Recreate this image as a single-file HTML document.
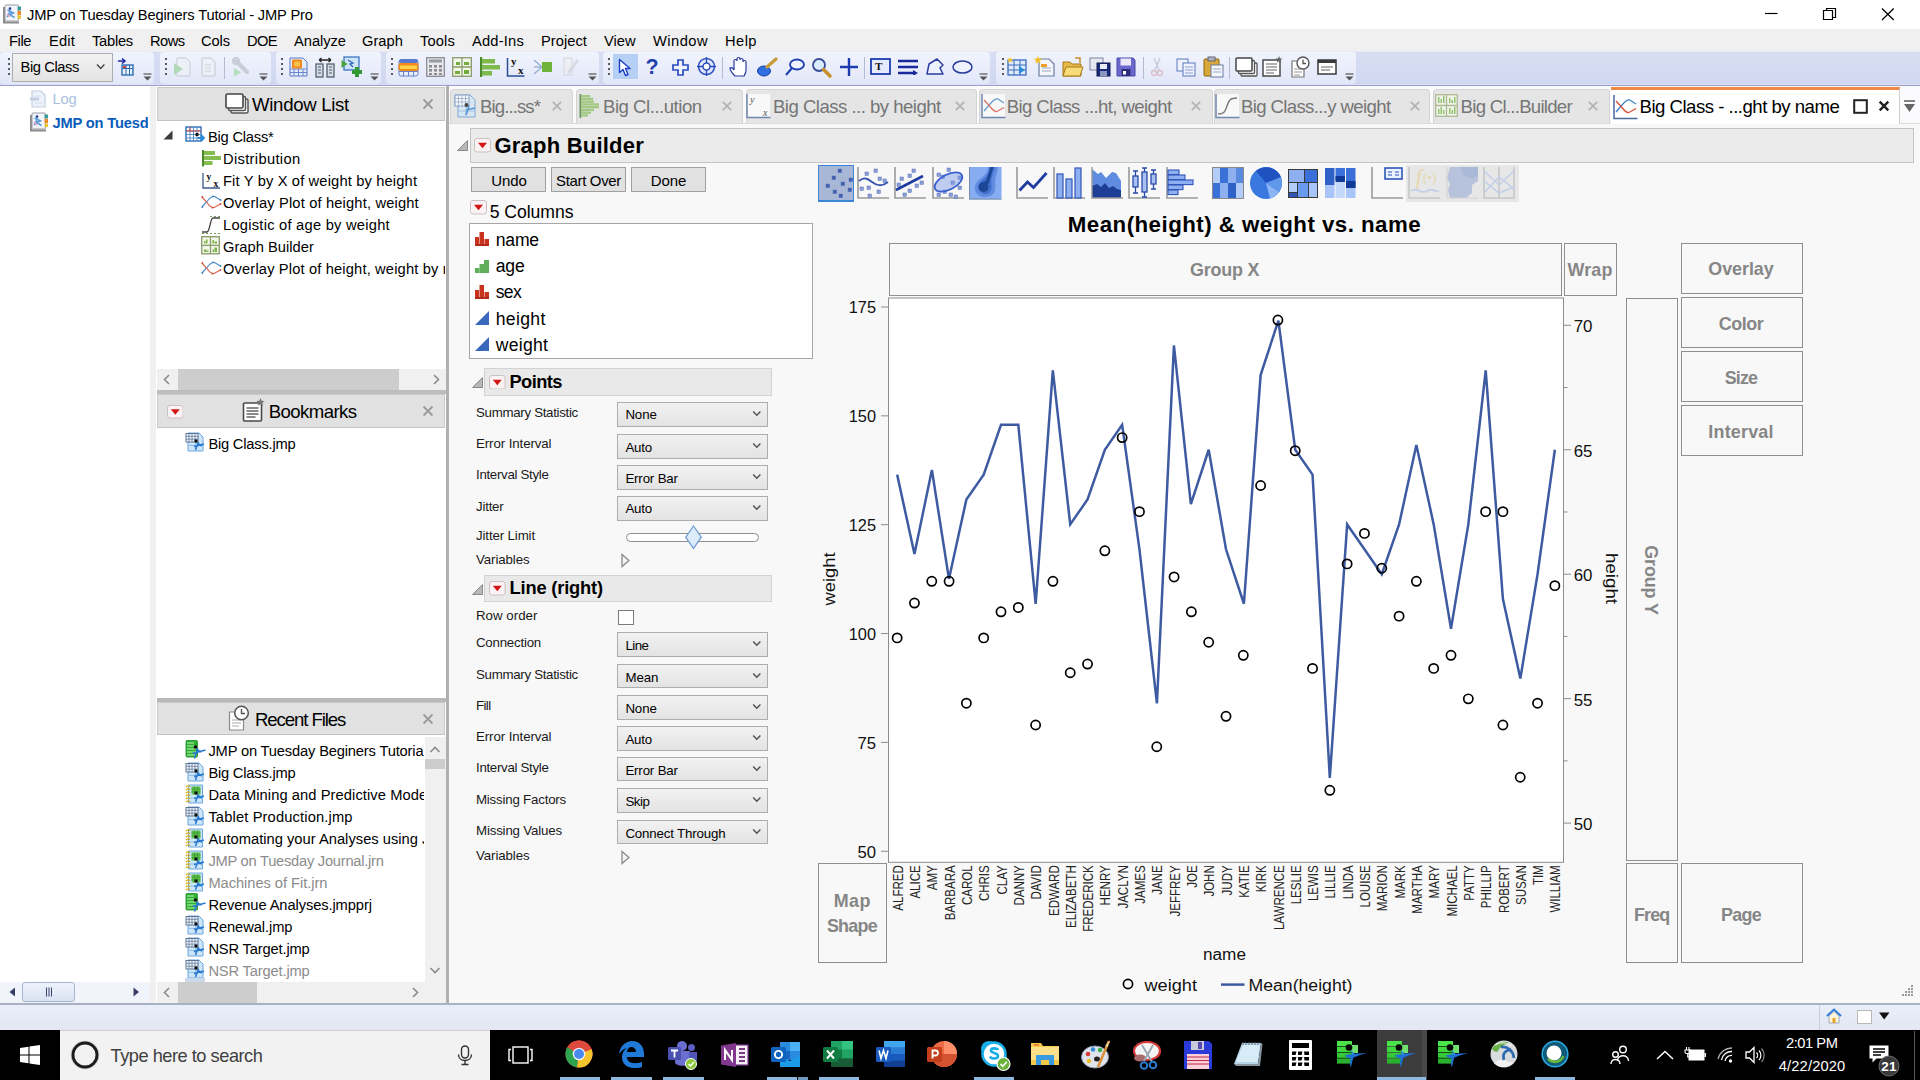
<!DOCTYPE html>
<html lang="en"><head><meta charset="utf-8"><title>JMP on Tuesday Beginers Tutorial - JMP Pro</title>
<style>
html,body{margin:0;padding:0;}
body{width:1920px;height:1080px;overflow:hidden;position:relative;background:#f0f0f0;font-family:"Liberation Sans",sans-serif;}
.b{position:absolute;display:block;}
.t{position:absolute;white-space:nowrap;display:block;}
</style></head>
<body>
<div class="b" style="left:0px;top:0px;width:1920px;height:29px;background:#fff;"></div>
<svg class="b" style="left:3px;top:4px;" width="19" height="20" viewBox="0 0 19 20">
<path d="M1 3v15.500h15" stroke="#8a8a8a" stroke-width="2.200" fill="none"/>
<rect x="2" y="1" width="13.500" height="16" rx="1" fill="#f1f4fa" stroke="#9a9aa2" stroke-width="1"/>
<rect x="14.500" y="2.500" width="3.500" height="4" fill="#3a9a96"/>
<rect x="14.500" y="7" width="3.500" height="4" fill="#f08a28"/>
<rect x="14.500" y="11.500" width="3.500" height="3.500" fill="#e8c83a"/>
<path d="M4 13c2-2 3-5 3-9M4.500 6l6 3-4 1.500 5 3" stroke="#5a9ad8" stroke-width="1.500" fill="none"/>
<circle cx="7" cy="4.500" r="1.300" fill="#2a3a8a"/>
<path d="M4 10l3 3" stroke="#e8a0c0" stroke-width="1.500"/>
</svg>
<span class="t" style="left:27.00px;top:7.56px;font-size:14.7px;line-height:14.7px;color:#000;letter-spacing:-0.161px;">JMP on Tuesday Beginers Tutorial - JMP Pro</span>
<svg class="b" style="left:1750px;top:0px;" width="170" height="29" viewBox="0 0 170 29">
<path d="M15 13.500h12.500" stroke="#000" stroke-width="1.200"/>
<path d="M73.500 10.500h9v9h-9z M76.500 10.500V8.500h9v9h-3" stroke="#000" stroke-width="1.200" fill="none"/>
<path d="M132 8.500l11.700 11.500 M143.700 8.500l-11.700 11.500" stroke="#000" stroke-width="1.250"/>
</svg>
<div class="b" style="left:0px;top:29px;width:1920px;height:22px;background:#f0f0f0;"></div>
<span class="t" style="left:9.00px;top:33.56px;font-size:14.7px;line-height:14.7px;color:#000;letter-spacing:-0.422px;">File</span>
<span class="t" style="left:49.00px;top:33.56px;font-size:14.7px;line-height:14.7px;color:#000;letter-spacing:0.167px;">Edit</span>
<span class="t" style="left:92.00px;top:33.56px;font-size:14.7px;line-height:14.7px;color:#000;letter-spacing:-0.249px;">Tables</span>
<span class="t" style="left:150.00px;top:33.56px;font-size:14.7px;line-height:14.7px;color:#000;letter-spacing:-0.565px;">Rows</span>
<span class="t" style="left:201.00px;top:33.56px;font-size:14.7px;line-height:14.7px;color:#000;letter-spacing:-0.102px;">Cols</span>
<span class="t" style="left:247.00px;top:33.56px;font-size:14.7px;line-height:14.7px;color:#000;letter-spacing:-0.618px;">DOE</span>
<span class="t" style="left:294.00px;top:33.56px;font-size:14.7px;line-height:14.7px;color:#000;letter-spacing:-0.043px;">Analyze</span>
<span class="t" style="left:362.00px;top:33.56px;font-size:14.7px;line-height:14.7px;color:#000;letter-spacing:0.029px;">Graph</span>
<span class="t" style="left:420.00px;top:33.56px;font-size:14.7px;line-height:14.7px;color:#000;letter-spacing:0.136px;">Tools</span>
<span class="t" style="left:472.00px;top:33.56px;font-size:14.7px;line-height:14.7px;color:#000;letter-spacing:0.191px;">Add-Ins</span>
<span class="t" style="left:541.00px;top:33.56px;font-size:14.7px;line-height:14.7px;color:#000;letter-spacing:0.035px;">Project</span>
<span class="t" style="left:604.00px;top:33.56px;font-size:14.7px;line-height:14.7px;color:#000;letter-spacing:-0.025px;">View</span>
<span class="t" style="left:653.00px;top:33.56px;font-size:14.7px;line-height:14.7px;color:#000;letter-spacing:0.453px;">Window</span>
<span class="t" style="left:725.00px;top:33.56px;font-size:14.7px;line-height:14.7px;color:#000;letter-spacing:0.442px;">Help</span>
<div class="b" style="left:0px;top:51px;width:1920px;height:34px;background:linear-gradient(#d8def2,#d0d7f1);"></div>
<div class="b" style="left:0px;top:51px;width:1920px;height:1px;background:#e8ebf6;"></div>
<div class="b" style="left:0px;top:84px;width:1920px;height:1px;background:#dcdff5;"></div>
<div class="b" style="left:0px;top:85px;width:1920px;height:1px;background:#9ba2c9;"></div>
<div class="b" style="left:0px;top:52px;width:154px;height:32px;background:linear-gradient(#f1f4fd,#e2e7f9);border-radius:4px;"></div>
<div class="b" style="left:160px;top:52px;width:111px;height:32px;background:linear-gradient(#f1f4fd,#e2e7f9);border-radius:4px;"></div>
<div class="b" style="left:276px;top:52px;width:105px;height:32px;background:linear-gradient(#f1f4fd,#e2e7f9);border-radius:4px;"></div>
<div class="b" style="left:386px;top:52px;width:213px;height:32px;background:linear-gradient(#f1f4fd,#e2e7f9);border-radius:4px;"></div>
<div class="b" style="left:603px;top:52px;width:387px;height:32px;background:linear-gradient(#f1f4fd,#e2e7f9);border-radius:4px;"></div>
<div class="b" style="left:996px;top:52px;width:360px;height:32px;background:linear-gradient(#f1f4fd,#e2e7f9);border-radius:4px;"></div>
<svg class="b" style="left:8px;top:58px;" width="3" height="18" viewBox="0 0 3 18"><g fill="#5a5a5a"><rect x="0" y="0" width="2" height="2"/><rect x="0" y="5" width="2" height="2"/><rect x="0" y="10" width="2" height="2"/><rect x="0" y="15" width="2" height="2"/></g></svg>
<svg class="b" style="left:165px;top:58px;" width="3" height="18" viewBox="0 0 3 18"><g fill="#5a5a5a"><rect x="0" y="0" width="2" height="2"/><rect x="0" y="5" width="2" height="2"/><rect x="0" y="10" width="2" height="2"/><rect x="0" y="15" width="2" height="2"/></g></svg>
<svg class="b" style="left:281px;top:58px;" width="3" height="18" viewBox="0 0 3 18"><g fill="#5a5a5a"><rect x="0" y="0" width="2" height="2"/><rect x="0" y="5" width="2" height="2"/><rect x="0" y="10" width="2" height="2"/><rect x="0" y="15" width="2" height="2"/></g></svg>
<svg class="b" style="left:391px;top:58px;" width="3" height="18" viewBox="0 0 3 18"><g fill="#5a5a5a"><rect x="0" y="0" width="2" height="2"/><rect x="0" y="5" width="2" height="2"/><rect x="0" y="10" width="2" height="2"/><rect x="0" y="15" width="2" height="2"/></g></svg>
<svg class="b" style="left:608px;top:58px;" width="3" height="18" viewBox="0 0 3 18"><g fill="#5a5a5a"><rect x="0" y="0" width="2" height="2"/><rect x="0" y="5" width="2" height="2"/><rect x="0" y="10" width="2" height="2"/><rect x="0" y="15" width="2" height="2"/></g></svg>
<svg class="b" style="left:1002px;top:58px;" width="3" height="18" viewBox="0 0 3 18"><g fill="#5a5a5a"><rect x="0" y="0" width="2" height="2"/><rect x="0" y="5" width="2" height="2"/><rect x="0" y="10" width="2" height="2"/><rect x="0" y="15" width="2" height="2"/></g></svg>
<svg class="b" style="left:143px;top:73px;" width="9" height="8" viewBox="0 0 9 8"><path d="M0.5 1h8" stroke="#555" stroke-width="1.2"/><path d="M0.5 3.5h8l-4 4z" fill="#555"/></svg>
<svg class="b" style="left:259px;top:73px;" width="9" height="8" viewBox="0 0 9 8"><path d="M0.5 1h8" stroke="#555" stroke-width="1.2"/><path d="M0.5 3.5h8l-4 4z" fill="#555"/></svg>
<svg class="b" style="left:370px;top:73px;" width="9" height="8" viewBox="0 0 9 8"><path d="M0.5 1h8" stroke="#555" stroke-width="1.2"/><path d="M0.5 3.5h8l-4 4z" fill="#555"/></svg>
<svg class="b" style="left:588px;top:73px;" width="9" height="8" viewBox="0 0 9 8"><path d="M0.5 1h8" stroke="#555" stroke-width="1.2"/><path d="M0.5 3.5h8l-4 4z" fill="#555"/></svg>
<svg class="b" style="left:979px;top:73px;" width="9" height="8" viewBox="0 0 9 8"><path d="M0.5 1h8" stroke="#555" stroke-width="1.2"/><path d="M0.5 3.5h8l-4 4z" fill="#555"/></svg>
<svg class="b" style="left:1345px;top:73px;" width="9" height="8" viewBox="0 0 9 8"><path d="M0.5 1h8" stroke="#555" stroke-width="1.2"/><path d="M0.5 3.5h8l-4 4z" fill="#555"/></svg>
<div class="b" style="left:12px;top:53px;width:98.5px;height:27px;background:linear-gradient(#f3f3f3,#e4e4e4);border:1px solid #adadad;"></div>
<span class="t" style="left:20.50px;top:60.06px;font-size:14.7px;line-height:14.7px;color:#000;letter-spacing:-0.399px;">Big Class</span>
<svg class="b" style="left:96px;top:63px;" width="10" height="8" viewBox="0 0 10 8"><path d="M1 1.5l3.7 4 3.7-4" stroke="#444" stroke-width="1.4" fill="none"/></svg>
<svg class="b" style="left:117px;top:57px;" width="18" height="20" viewBox="0 0 18 20"><path d="M1 4h6M5 1.5l3 2.5-3 2.5" stroke="#1a2ea0" stroke-width="1.6" fill="none"/><rect x="5" y="8" width="11" height="10" fill="#e9f2fb" stroke="#2c6db4" stroke-width="1.4"/><path d="M5 11.5h11M9 8v10M12.5 8v10" stroke="#2c6db4" stroke-width="1"/><rect x="6" y="9" width="3" height="2" fill="#d23c3c"/></svg>
<svg class="b" style="left:172px;top:57px;opacity:0.75;" width="20" height="20" viewBox="0 0 20 20"><path d="M5 1h9l4 4v14H5z" fill="#eef1f6" stroke="#b8c0cc"/><path d="M2 6l9 6-9 6z" fill="#9ed3a2"/></svg>
<svg class="b" style="left:200px;top:57px;opacity:0.8;" width="18" height="20" viewBox="0 0 18 20"><path d="M2 1h9l4 4v14H2z" fill="#eef1f6" stroke="#b8c0cc"/><path d="M5 8h6M5 11h6M5 14h6" stroke="#c8ced8"/></svg>
<div class="b" style="left:224px;top:57px;width:1px;height:22px;background:#b4bad0;"></div>
<svg class="b" style="left:231px;top:57px;opacity:0.85;" width="22" height="20" viewBox="0 0 22 20"><path d="M4 3l12 12" stroke="#c3c8d2" stroke-width="4" stroke-linecap="round"/><circle cx="5" cy="4" r="3.2" fill="none" stroke="#c3c8d2" stroke-width="2"/><path d="M3 11l7 4.5-7 4z" fill="#a9dcae"/></svg>
<svg class="b" style="left:289px;top:57px;" width="20" height="20" viewBox="0 0 20 20"><path d="M1 1h13l4 4v14H1z" fill="#e4ecfa" stroke="#5a78c8"/><path d="M1 12h17M1 15.5h17M5 12v7M9.5 12v7M14 12v7" stroke="#6a86d0" stroke-width="1"/><rect x="3" y="2.5" width="10" height="9" rx="1" fill="#f08a1e"/><rect x="5" y="4.5" width="6" height="5" fill="#f8c14a"/></svg>
<svg class="b" style="left:315px;top:56px;" width="20" height="22" viewBox="0 0 20 22"><path d="M4 4h12M4 4l2.5-2M4 4l2.5 2M16 4l-2.5-2M16 4l-2.5 2" stroke="#222" stroke-width="1.3" fill="none"/><rect x="1" y="8" width="7" height="13" fill="#d7dde4" stroke="#50606e" stroke-width="1.3"/><rect x="12" y="8" width="7" height="13" fill="#d7dde4" stroke="#50606e" stroke-width="1.3"/><path d="M3 11h3M3 14h3M3 17h3M14 11h3M14 14h3M14 17h3" stroke="#7b8794" stroke-width="1.3"/></svg>
<svg class="b" style="left:341px;top:56px;" width="23" height="23" viewBox="0 0 23 23"><rect x="3" y="1" width="15" height="13" fill="#cfe3f8" stroke="#3b78c2" stroke-width="1.3"/><path d="M7 4l5 3-3 1 3 3" stroke="#2b67b4" stroke-width="1.3" fill="none"/><path d="M0.5 4l6 4-6 4z" fill="#46a33f"/><path d="M11 16h10M16 11v10" stroke="#2f9a2f" stroke-width="4"/></svg>
<svg class="b" style="left:398px;top:57px;" width="21" height="20" viewBox="0 0 21 20"><rect x="1" y="3" width="19" height="16" rx="2" fill="#e8eefb" stroke="#6a84cc"/><path d="M1 14.5h19M5.5 14v5M10.5 14v5M15.5 14v5" stroke="#6a84cc"/><rect x="1" y="2" width="19" height="4" rx="2" fill="#5a7ad0"/><rect x="0.5" y="6" width="20" height="8" rx="2" fill="#f28a1c"/><rect x="2" y="8.5" width="17" height="3.5" fill="#fdd44c"/></svg>
<svg class="b" style="left:426px;top:57px;" width="19" height="20" viewBox="0 0 19 20"><rect x="0.7" y="0.7" width="17.6" height="18.6" fill="#e9e9ec" stroke="#8c8c94" stroke-width="1.3"/><rect x="3" y="2.5" width="13" height="3" fill="#9a9aa4"/><g fill="#8c8c94"><rect x="3" y="8" width="3" height="2.6"/><rect x="8" y="8" width="3" height="2.6"/><rect x="13" y="8" width="3" height="2.6"/><rect x="3" y="12" width="3" height="2.6"/><rect x="8" y="12" width="3" height="2.6"/><rect x="13" y="12" width="3" height="2.6"/><rect x="3" y="16" width="3" height="2"/><rect x="8" y="16" width="3" height="2"/><rect x="13" y="16" width="3" height="2"/></g></svg>
<svg class="b" style="left:452px;top:57px;" width="20" height="20" viewBox="0 0 20 20"><rect x="0.7" y="0.7" width="18.6" height="18.6" fill="#f2f6e8" stroke="#8a9a6a" stroke-width="1.3"/><path d="M10 1v18M1 10h18" stroke="#8a9a6a" stroke-width="1.3"/><g fill="#6fae3a"><rect x="4" y="5" width="4" height="3"/><rect x="12" y="5" width="5" height="3"/><rect x="3" y="14" width="5" height="3"/><rect x="12" y="13" width="5" height="4"/></g></svg>
<svg class="b" style="left:480px;top:57px;" width="20" height="20" viewBox="0 0 20 20"><rect x="0" y="0" width="2.2" height="20" fill="#4d8a2a"/><rect x="2" y="2" width="13" height="4.5" fill="#7fba4c"/><rect x="2" y="8" width="18" height="4.5" fill="#7fba4c"/><rect x="2" y="14" width="10" height="4.5" fill="#7fba4c"/></svg>
<svg class="b" style="left:506px;top:56px;" width="20" height="22" viewBox="0 0 20 22"><path d="M1.5 2v18h17" stroke="#2a4e92" stroke-width="1.5" fill="none"/><text x="5" y="9" font-family="Liberation Serif,serif" font-weight="700" font-size="11" fill="#111">y</text><text x="12" y="18" font-family="Liberation Serif,serif" font-weight="700" font-size="11" fill="#111">x</text></svg>
<svg class="b" style="left:533px;top:58px;" width="20" height="18" viewBox="0 0 20 18"><path d="M1 2l8 7M1 9h8M1 16l8-7" stroke="#9db4d8" stroke-width="1.6" fill="none"/><rect x="9" y="4" width="10" height="10" fill="#6fb43a"/></svg>
<svg class="b" style="left:562px;top:57px;opacity:0.9;" width="20" height="20" viewBox="0 0 20 20"><rect x="2" y="1" width="8" height="17" fill="#eef0f5" stroke="#d0d4de"/><path d="M16 3L6 16" stroke="#d6d9e2" stroke-width="3"/></svg>
<div class="b" style="left:613px;top:54px;width:25px;height:25px;background:#b5cff5;"></div>
<svg class="b" style="left:618px;top:58px;" width="14" height="20" viewBox="0 0 14 20"><path d="M1.5 1.5v13l3.5-3 2.5 6 2.5-1-2.5-6h4.5z" fill="#fff" stroke="#1c3ec8" stroke-width="1.4" stroke-linejoin="round"/></svg>
<span class="t" style="left:645.50px;top:57.30px;font-size:21.5px;line-height:21.5px;color:#2240ae;letter-spacing:0.367px;font-weight:700;">?</span>
<svg class="b" style="left:672px;top:59px;" width="17" height="17" viewBox="0 0 17 17"><path d="M6 1h5v5H16v5h-5V16h-5v-5H1v-5h5z" fill="#eef3ff" stroke="#2a4cc0" stroke-width="1.7"/></svg>
<svg class="b" style="left:697px;top:57px;" width="19" height="19" viewBox="0 0 19 19"><circle cx="9.500" cy="9.500" r="8" fill="#dfe8fb" stroke="#2a4cc0" stroke-width="1.5"/><circle cx="9.500" cy="9.500" r="3.5" fill="#fff" stroke="#2a4cc0" stroke-width="1.5"/><path d="M9.500 0v6M9.500 13v6M0 9.500h6M13 9.500h6" stroke="#2a4cc0" stroke-width="1.3"/></svg>
<div class="b" style="left:722px;top:57px;width:1px;height:22px;background:#b4bad0;"></div>
<svg class="b" style="left:729px;top:56px;" width="22" height="22" viewBox="0 0 22 22"><path d="M6 20c-3-3-5-6-5-8 1-1 3 0 4 2V5c0-2 3-2 3 0V3c0-2 3-2 3 0v1c0-2 3-2 3 0v2c0-2 3-2 3 0v8c0 3-1 4-2 6z" fill="#fff" stroke="#2a3c9c" stroke-width="1.2"/></svg>
<svg class="b" style="left:757px;top:57px;" width="21" height="20" viewBox="0 0 21 20"><ellipse cx="7" cy="14" rx="6.5" ry="5" fill="#2f6fe0" stroke="#1a3ca0"/><path d="M10 10L19 2" stroke="#c79a3a" stroke-width="3.2" stroke-linecap="round"/></svg>
<svg class="b" style="left:785px;top:58px;" width="20" height="19" viewBox="0 0 20 19"><ellipse cx="12" cy="6.500" rx="7" ry="5" fill="#eef2ff" stroke="#1c3cb0" stroke-width="1.8"/><path d="M7 10L1 17" stroke="#1c3cb0" stroke-width="2"/></svg>
<svg class="b" style="left:811px;top:57px;" width="21" height="21" viewBox="0 0 21 21"><circle cx="8" cy="8" r="6" fill="#d8ecfb" stroke="#3a4a9a" stroke-width="1.8"/><path d="M12.500 12.500L19 19" stroke="#c8902a" stroke-width="3.4" stroke-linecap="round"/></svg>
<svg class="b" style="left:840px;top:58px;" width="18" height="18" viewBox="0 0 18 18"><path d="M9 0v18M0 9h18" stroke="#1c3cb0" stroke-width="2.4"/></svg>
<div class="b" style="left:864px;top:57px;width:1px;height:22px;background:#b4bad0;"></div>
<svg class="b" style="left:870px;top:58px;" width="21" height="17" viewBox="0 0 21 17"><rect x="1" y="1" width="19" height="15" fill="#e4ecfb" stroke="#1c3cb0" stroke-width="1.8"/><text x="5" y="12" font-family="Liberation Serif,serif" font-weight="700" font-size="11" fill="#111">T</text></svg>
<svg class="b" style="left:898px;top:59px;" width="21" height="16" viewBox="0 0 21 16"><path d="M0 2h20M0 8h20M0 14h15" stroke="#1a2a9a" stroke-width="2.6"/><path d="M15 11l5 3-5 3z" fill="#1a2a9a"/></svg>
<svg class="b" style="left:925px;top:58px;" width="20" height="18" viewBox="0 0 20 18"><path d="M2 16L4 6 12 1l6 6-3 3 3 6z" fill="#eef2ff" stroke="#2a3c9c" stroke-width="1.5" stroke-linejoin="round"/></svg>
<svg class="b" style="left:952px;top:60px;" width="21" height="14" viewBox="0 0 21 14"><ellipse cx="10.500" cy="7" rx="9.500" ry="6" fill="#eef2ff" stroke="#2a3c9c" stroke-width="1.5"/></svg>
<svg class="b" style="left:1007px;top:57px;" width="21" height="20" viewBox="0 0 21 20"><rect x="1" y="3" width="18" height="15" fill="#dfeafa" stroke="#3b6cc0" stroke-width="1.3"/><path d="M1 8h18M1 13h18M7 3v15M13 3v15" stroke="#3b6cc0"/><path d="M3 0l1 2 2 0-1.500 1.500 0.500 2-2-1-2 1 0.500-2L0 2l2 0z" fill="#f2c230"/><path d="M12 9l6 4-6 4z" fill="#2a8ad8"/></svg>
<svg class="b" style="left:1034px;top:56px;" width="22" height="21" viewBox="0 0 22 21"><path d="M5 3h10l5 5v12H5z" fill="#f4f6fb" stroke="#6a7ca0" stroke-width="1.2"/><path d="M8 12h9M8 15h9" stroke="#9aa6c0"/><path d="M4 0l1.200 2.500 2.800 0.300-2 2 0.500 2.700-2.500-1.300-2.500 1.300 0.500-2.700-2-2 2.800-0.300z" fill="#f2c230"/><rect x="7" y="8" width="6" height="3" fill="#e8a02a"/></svg>
<svg class="b" style="left:1062px;top:57px;" width="22" height="20" viewBox="0 0 22 20"><path d="M1 5h7l2 2h9v12H1z" fill="#e8b84a" stroke="#a87818"/><path d="M1 19l3-9h17l-3 9z" fill="#f8dc7a" stroke="#a87818"/><path d="M13 1l5 0 0 5" stroke="#c8902a" stroke-width="1.5" fill="none"/></svg>
<svg class="b" style="left:1089px;top:57px;" width="22" height="20" viewBox="0 0 22 20"><rect x="1" y="1" width="13" height="12" fill="#e4e8f0" stroke="#7a86a0"/><rect x="8" y="6" width="13" height="13" fill="#1a2a7a" stroke="#101850"/><rect x="11" y="7" width="7" height="5" fill="#e8ecf6"/><rect x="11" y="14" width="7" height="5" fill="#8a96c0"/></svg>
<svg class="b" style="left:1116px;top:57px;" width="20" height="20" viewBox="0 0 20 20"><path d="M1 1h16l2 2v16H1z" fill="#6a68cc" stroke="#4a48a8"/><rect x="4.5" y="1.5" width="10.5" height="7" fill="#eceafa"/><rect x="5.5" y="12" width="9" height="7" fill="#2e2e7e"/><rect x="7" y="14" width="3" height="3.5" fill="#fff"/></svg>
<div class="b" style="left:1143px;top:57px;width:1px;height:22px;background:#b4bad0;"></div>
<svg class="b" style="left:1150px;top:57px;opacity:0.9;" width="14" height="20" viewBox="0 0 14 20"><path d="M4 1l5 12M10 1L5 13" stroke="#c4c8d4" stroke-width="1.4"/><circle cx="4" cy="16" r="2.500" fill="none" stroke="#d8b8c0" stroke-width="1.300"/><circle cx="10" cy="16" r="2.500" fill="none" stroke="#d8b8c0" stroke-width="1.300"/></svg>
<svg class="b" style="left:1176px;top:58px;" width="20" height="19" viewBox="0 0 20 19"><rect x="1" y="1" width="11" height="12" fill="#eef2fb" stroke="#5a78c0"/><rect x="7" y="5" width="12" height="13" fill="#eef2fb" stroke="#5a78c0"/><path d="M9 9h8M9 12h8M9 15h8" stroke="#8aa0d8"/></svg>
<svg class="b" style="left:1203px;top:56px;" width="21" height="22" viewBox="0 0 21 22"><rect x="1" y="3" width="15" height="17" rx="1" fill="#d8a83a" stroke="#8a6410"/><rect x="5" y="1" width="7" height="4" fill="#b0b4c0" stroke="#60646e"/><rect x="8" y="9" width="12" height="12" fill="#f4f6fb" stroke="#6a7ca0"/><path d="M10 13h8M10 16h8" stroke="#9aa6c0"/></svg>
<div class="b" style="left:1229px;top:57px;width:1px;height:22px;background:#b4bad0;"></div>
<svg class="b" style="left:1235px;top:57px;" width="23" height="21" viewBox="0 0 23 21"><rect x="6" y="6" width="16" height="13" rx="1" fill="#fff" stroke="#555" stroke-width="1.3"/><rect x="3.5" y="3.5" width="16" height="13" rx="1" fill="#fff" stroke="#555" stroke-width="1.3"/><rect x="1" y="1" width="16" height="13" rx="1" fill="#fff" stroke="#444" stroke-width="1.5"/></svg>
<svg class="b" style="left:1262px;top:56px;" width="22" height="21" viewBox="0 0 22 21"><rect x="1" y="4" width="17" height="16" fill="#fff" stroke="#4a4a4a" stroke-width="1.500"/><path d="M4 8h11M4 11h11M4 14h11M4 17h8" stroke="#666" stroke-width="1.200"/><path d="M17 0l1 2.500 2.500 0-2 1.800 0.800 2.500-2.300-1.500-2.300 1.500 0.800-2.500-2-1.800 2.500 0z" fill="#666"/></svg>
<svg class="b" style="left:1291px;top:56px;" width="20" height="22" viewBox="0 0 20 22"><path d="M1 5h12v16H1z" fill="#fff" stroke="#777" stroke-width="1.200"/><path d="M3 13h8M3 16h8M3 19h6" stroke="#999"/><circle cx="12" cy="7" r="6" fill="#fff" stroke="#555" stroke-width="1.400"/><path d="M12 3.500v4h3" stroke="#555" stroke-width="1.300" fill="none"/></svg>
<svg class="b" style="left:1317px;top:59px;" width="20" height="16" viewBox="0 0 20 16"><rect x="1" y="1" width="18" height="14" fill="#fff" stroke="#3a3a3a" stroke-width="1.500"/><rect x="1" y="1" width="18" height="3" fill="#3a3a3a"/><path d="M4 8h12M4 11h9" stroke="#666" stroke-width="1.200"/></svg>
<div class="b" style="left:0px;top:86px;width:450px;height:918px;background:#f0f0f0;"></div>
<div class="b" style="left:0px;top:86px;width:149.5px;height:896px;background:#fff;"></div>
<svg class="b" style="left:29px;top:90px;" width="19" height="18" viewBox="0 0 19 18"><path d="M3 1h9l4 4v12H3z" fill="#eef3fa" stroke="#c3d0e2" stroke-width="1.200"/><path d="M1 9h9" stroke="#c3d0e2" stroke-width="3"/><path d="M5 6h7M5 13h8" stroke="#d4deec"/></svg>
<span class="t" style="left:52.50px;top:92.06px;font-size:14.7px;line-height:14.7px;color:#a9c1dc;letter-spacing:-0.176px;">Log</span>
<svg class="b" style="left:30px;top:112px;" width="19" height="20" viewBox="0 0 19 20">
<path d="M1 3v15.500h15" stroke="#8a8a8a" stroke-width="2.200" fill="none"/>
<rect x="2" y="1" width="13.500" height="16" rx="1" fill="#f1f4fa" stroke="#9a9aa2" stroke-width="1"/>
<rect x="14.500" y="2.500" width="3.500" height="4" fill="#3a9a96"/>
<rect x="14.500" y="7" width="3.500" height="4" fill="#f08a28"/>
<rect x="14.500" y="11.500" width="3.500" height="3.500" fill="#e8c83a"/>
<path d="M4 13c2-2 3-5 3-9M4.500 6l6 3-4 1.500 5 3" stroke="#5a9ad8" stroke-width="1.500" fill="none"/>
<circle cx="7" cy="4.500" r="1.300" fill="#2a3a8a"/>
<path d="M4 10l3 3" stroke="#e8a0c0" stroke-width="1.500"/>
</svg>
<div class="b" style="left:52px;top:110px;width:95.5px;height:24px;overflow:hidden;"><span class="t" style="left:0.50px;top:5.86px;font-size:14.7px;line-height:14.7px;color:#0b5cba;letter-spacing:-0.189px;font-weight:700;">JMP on Tuesday</span></div>
<div class="b" style="left:0px;top:982px;width:149px;height:20px;background:#f1f4fb;"></div>
<svg class="b" style="left:6px;top:984px;" width="12" height="16" viewBox="0 0 12 16"><path d="M9 3.500L3.500 8 9 12.500z" fill="#3a3f6a"/></svg>
<svg class="b" style="left:130px;top:984px;" width="12" height="16" viewBox="0 0 12 16"><path d="M3.500 3.500L9 8 3.500 12.500z" fill="#3a3f6a"/></svg>
<div class="b" style="left:22px;top:982px;width:51px;height:18px;background:linear-gradient(#eef3fb,#d9e3f4);border:1px solid #aab6cf;border-radius:3px;"></div>
<svg class="b" style="left:44px;top:986px;" width="10" height="12" viewBox="0 0 10 12"><path d="M2.500 1.500v9M5 1.500v9M7.500 1.500v9" stroke="#3a3f6a" stroke-width="1"/></svg>
<div class="b" style="left:446px;top:86px;width:3px;height:918px;background:#b0b0b0;"></div>
<div class="b" style="left:156px;top:86px;width:290px;height:917px;background:#fff;"></div>
<div class="b" style="left:157px;top:86.5px;width:287.5px;height:34px;background:#e1e1e1;border:1px solid #cacaca;box-sizing:border-box;border-bottom-color:#c4c4c4;"></div>
<svg class="b" style="left:225px;top:92px;" width="24" height="22" viewBox="0 0 24 22"><rect x="6" y="7" width="17" height="14" rx="1.500" fill="#fff" stroke="#555" stroke-width="1.500"/><rect x="3.500" y="4.500" width="17" height="14" rx="1.500" fill="#fff" stroke="#555" stroke-width="1.500"/><rect x="1" y="2" width="17" height="14" rx="1.500" fill="#fff" stroke="#444" stroke-width="1.600"/></svg>
<span class="t" style="left:252.00px;top:95.56px;font-size:18.6px;line-height:18.6px;color:#000;letter-spacing:-0.297px;">Window List</span>
<svg class="b" style="left:421px;top:96.5px;" width="14" height="14" viewBox="0 0 14 14"><path d="M2.5 2.5L11.5 11.5M11.5 2.5L2.5 11.5" stroke="#9a9a9a" stroke-width="1.8"/></svg>
<svg class="b" style="left:162px;top:129px;" width="12" height="12" viewBox="0 0 12 12"><path d="M10.500 1.500v9h-9z" fill="#3c3c3c"/></svg>
<svg class="b" style="left:185px;top:126px;" width="20" height="19" viewBox="0 0 20 19"><rect x="1" y="1" width="15" height="14" fill="#fff" stroke="#2c6db4" stroke-width="1.400"/><path d="M1 5h15M1 8.500h15M1 12h15M5 1v14M8.500 1v14M12 1v14" stroke="#4c86c8" stroke-width="0.900"/><path d="M1 5h15M5 1v4" stroke="#d04040" stroke-width="1"/><rect x="10.500" y="7" width="3" height="3" fill="#111"/><path d="M13 12l6 0M16 9l3 3-3 3" stroke="#2a8ad8" stroke-width="1.800" fill="none"/></svg>
<span class="t" style="left:208.00px;top:130.06px;font-size:14.7px;line-height:14.7px;color:#000;letter-spacing:-0.221px;">Big Class*</span>
<svg class="b" style="left:201.5px;top:150.3px;" width="20" height="17" viewBox="0 0 20 17"><rect x="0" y="0" width="2" height="16.500" fill="#4d8a2a"/><rect x="2" y="1" width="11" height="4" fill="#84bd50"/><rect x="2" y="6" width="17" height="4" fill="#84bd50"/><rect x="2" y="11" width="8.500" height="4" fill="#84bd50"/></svg>
<span class="t" style="left:223.00px;top:151.86px;font-size:14.7px;line-height:14.7px;color:#000;letter-spacing:0.331px;">Distribution</span>
<svg class="b" style="left:201.5px;top:173.3px;" width="20" height="17" viewBox="0 0 20 17"><path d="M1 0v15h17" stroke="#3a5a8c" stroke-width="1.300" fill="none"/><text x="4.500" y="6.500" font-family="Liberation Serif,serif" font-weight="700" font-size="9.500" fill="#111">y</text><text x="11.500" y="13.500" font-family="Liberation Serif,serif" font-weight="700" font-size="9.500" fill="#111">x</text></svg>
<span class="t" style="left:223.00px;top:173.86px;font-size:14.7px;line-height:14.7px;color:#000;letter-spacing:0.148px;">Fit Y by X of weight by height</span>
<svg class="b" style="left:201px;top:194.8px;" width="21" height="15" viewBox="0 0 21 15"><path d="M1 12L6 6.500Q10 1 13.500 1.500L19.500 5" stroke="#4a8ac8" stroke-width="1.150" fill="none"/><path d="M1 2L6 7.500Q9.500 13 13 12.500L19.500 9" stroke="#d8604a" stroke-width="1.150" fill="none"/><g fill="#3a7ab8"><circle cx="1.300" cy="12" r="0.900"/><circle cx="12" cy="1.300" r="0.900"/><circle cx="19.500" cy="5" r="0.900"/></g><g fill="#d04a3a"><circle cx="1.300" cy="2" r="0.900"/><circle cx="11.500" cy="12.700" r="0.900"/><circle cx="19.500" cy="9" r="0.900"/></g></svg>
<span class="t" style="left:223.00px;top:195.86px;font-size:14.7px;line-height:14.7px;color:#000;letter-spacing:0.160px;">Overlay Plot of height, weight</span>
<svg class="b" style="left:201px;top:215.3px;" width="20" height="19" viewBox="0 0 20 19"><path d="M1 17h5c3 0 3-14 6-14h7" stroke="#444" stroke-width="1.300" fill="none"/><path d="M1 18.500h18" stroke="#7a9a5a" stroke-width="1" stroke-dasharray="2 2"/><path d="M9 1.500h10" stroke="#7a9a5a" stroke-width="1" stroke-dasharray="2 2"/></svg>
<span class="t" style="left:223.00px;top:217.86px;font-size:14.7px;line-height:14.7px;color:#000;letter-spacing:0.241px;">Logistic of age by weight</span>
<svg class="b" style="left:201px;top:236.3px;" width="19" height="19" viewBox="0 0 19 19"><rect x="0.700" y="0.700" width="17.600" height="17.100" fill="#f2f6e8" stroke="#8a9a6a" stroke-width="1.300"/><path d="M9.500 1v17M1 9.300h17" stroke="#8a9a6a" stroke-width="1.200"/><g fill="#78b444"><rect x="3" y="5" width="1.500" height="2.500"/><rect x="5" y="3.500" width="1.500" height="4"/><rect x="11.500" y="4" width="1.500" height="3.500"/><rect x="13.500" y="5.500" width="2.500" height="2"/><rect x="3" y="13.500" width="2.500" height="2.500"/><rect x="6" y="14.500" width="1.500" height="1.500"/><rect x="11.500" y="13.500" width="1.500" height="2.500"/><rect x="13.500" y="11.500" width="2.500" height="4.500"/></g></svg>
<span class="t" style="left:223.00px;top:239.86px;font-size:14.7px;line-height:14.7px;color:#000;letter-spacing:0.023px;">Graph Builder</span>
<svg class="b" style="left:201px;top:260.8px;" width="21" height="15" viewBox="0 0 21 15"><path d="M1 12L6 6.500Q10 1 13.500 1.500L19.500 5" stroke="#4a8ac8" stroke-width="1.150" fill="none"/><path d="M1 2L6 7.500Q9.500 13 13 12.500L19.500 9" stroke="#d8604a" stroke-width="1.150" fill="none"/><g fill="#3a7ab8"><circle cx="1.300" cy="12" r="0.900"/><circle cx="12" cy="1.300" r="0.900"/><circle cx="19.500" cy="5" r="0.900"/></g><g fill="#d04a3a"><circle cx="1.300" cy="2" r="0.900"/><circle cx="11.500" cy="12.700" r="0.900"/><circle cx="19.500" cy="9" r="0.900"/></g></svg>
<div class="b" style="left:223px;top:258.3px;width:222px;height:22px;overflow:hidden;"><span class="t" style="left:0.00px;top:3.56px;font-size:14.7px;line-height:14.7px;color:#000;letter-spacing:0.146px;">Overlay Plot of height, weight by name</span></div>
<div class="b" style="left:157px;top:369px;width:289px;height:21px;background:#f0f0f0;"></div>
<div class="b" style="left:178px;top:369px;width:221px;height:21px;background:#cdcdcd;"></div>
<svg class="b" style="left:157px;top:369px;" width="20" height="21" viewBox="0 0 20 21"><path d="M12 6.0l-4.500 4.500 4.500 4.500" stroke="#8a8a8a" stroke-width="1.600" fill="none"/></svg>
<svg class="b" style="left:426px;top:369px;" width="20" height="21" viewBox="0 0 20 21"><path d="M8 6.0l4.500 4.500-4.500 4.500" stroke="#8a8a8a" stroke-width="1.600" fill="none"/></svg>
<div class="b" style="left:157px;top:390px;width:289px;height:3.5px;background:#bdbdbd;"></div>
<div class="b" style="left:157px;top:393.5px;width:287.5px;height:34px;background:#e1e1e1;border:1px solid #cacaca;box-sizing:border-box;border-bottom-color:#c4c4c4;"></div>
<svg class="b" style="left:242px;top:398px;" width="23" height="24" viewBox="0 0 23 24"><rect x="1.500" y="5" width="18" height="18" rx="1" fill="#fff" stroke="#4a4a4a" stroke-width="1.600"/><path d="M4.500 10h12M4.500 13h12M4.500 16h12M4.500 19h9" stroke="#666" stroke-width="1.300"/><path d="M18.500 0l1.200 2.800 2.800 0.200-2.200 2 0.800 2.800-2.600-1.600-2.600 1.600 0.800-2.800-2.200-2 2.800-0.200z" fill="#777"/></svg>
<span class="t" style="left:268.80px;top:403.06px;font-size:18.6px;line-height:18.6px;color:#000;letter-spacing:-0.592px;">Bookmarks</span>
<svg class="b" style="left:421px;top:403.5px;" width="14" height="14" viewBox="0 0 14 14"><path d="M2.5 2.5L11.5 11.5M11.5 2.5L2.5 11.5" stroke="#9a9a9a" stroke-width="1.8"/></svg>
<svg class="b" style="left:166.5px;top:405px;" width="16.5" height="13.5" viewBox="0 0 16.5 13.5"><rect x="0.5" y="0.5" width="15.5" height="12.5" rx="2.5" fill="#fbf3f3" stroke="#c9c1c1"/><path d="M3.8 4.2h9l-4.500 5.500z" fill="#d31515"/></svg>
<svg class="b" style="left:185px;top:432px;" width="21" height="20" viewBox="0 0 21 20"><path d="M3 1h11l4 4v14H3z" fill="#cde5f9" stroke="#6aa6dc" stroke-width="1"/><rect x="1" y="1.500" width="12" height="8.500" fill="#f4f8fc" stroke="#50688c" stroke-width="0.900"/><path d="M1 4.300h12M1 7.200h12M4 1.500v8.500M7 1.500v8.500M10 1.500v8.500" stroke="#60789c" stroke-width="0.800"/><path d="M3 13.500h15M10.500 10v9" stroke="#8fc0e8" stroke-width="1"/><circle cx="11" cy="9" r="1.700" fill="#111"/><path d="M13.500 10l-3 8M9 14.500l10-2.500M12 11l5 3" stroke="#2a7ad0" stroke-width="1.500" fill="none"/></svg>
<span class="t" style="left:208.40px;top:436.96px;font-size:14.7px;line-height:14.7px;color:#000;letter-spacing:-0.212px;">Big Class.jmp</span>
<div class="b" style="left:157px;top:697.5px;width:289px;height:4px;background:#b8b8b8;"></div>
<div class="b" style="left:157px;top:702px;width:287.5px;height:33px;background:#e1e1e1;border:1px solid #cacaca;box-sizing:border-box;border-bottom-color:#c4c4c4;"></div>
<svg class="b" style="left:228px;top:705px;" width="22" height="26" viewBox="0 0 22 26"><path d="M1.500 7h14v18h-14z" fill="#fff" stroke="#8a8a8a" stroke-width="1.200"/><path d="M4 15h9M4 18h9M4 21h7" stroke="#aaa"/><circle cx="13.500" cy="8" r="6.800" fill="#fff" stroke="#555" stroke-width="1.500"/><path d="M13.500 4v4.500h3.500" stroke="#555" stroke-width="1.400" fill="none"/></svg>
<span class="t" style="left:255.00px;top:710.56px;font-size:18.6px;line-height:18.6px;color:#000;letter-spacing:-1.089px;">Recent Files</span>
<svg class="b" style="left:421px;top:711.7px;" width="14" height="14" viewBox="0 0 14 14"><path d="M2.5 2.5L11.5 11.5M11.5 2.5L2.5 11.5" stroke="#9a9a9a" stroke-width="1.8"/></svg>
<svg class="b" style="left:185px;top:739.8px;" width="22" height="20" viewBox="0 0 22 20"><rect x="1" y="0.500" width="11.500" height="16.500" rx="1" fill="#2fae34" stroke="#1c8a24" stroke-width="0.800"/><path d="M2 3h9.500M2 6h9.500M2 9h9.500M2 12h9.500M2 15h9.500" stroke="#8fe088" stroke-width="1.400"/><rect x="9" y="2" width="4" height="5" fill="#2fae34"/><circle cx="10.500" cy="7" r="1.800" fill="#111"/><path d="M13 8.500l-3.500 10M7.500 13.500l13-3.500M11 9.500l5.500 2.500" stroke="#2a7ad0" stroke-width="1.600" fill="none"/></svg>
<div class="b" style="left:208.4px;top:739.8px;width:216px;height:22px;overflow:hidden;"><span class="t" style="left:0.00px;top:4.36px;font-size:14.7px;line-height:14.7px;color:#000;letter-spacing:-0.165px;">JMP on Tuesday Beginers Tutorial.jmpprj</span></div>
<svg class="b" style="left:185px;top:761.75px;" width="21" height="20" viewBox="0 0 21 20"><path d="M3 1h11l4 4v14H3z" fill="#cde5f9" stroke="#6aa6dc" stroke-width="1"/><rect x="1" y="1.500" width="12" height="8.500" fill="#f4f8fc" stroke="#50688c" stroke-width="0.900"/><path d="M1 4.300h12M1 7.200h12M4 1.500v8.500M7 1.500v8.500M10 1.500v8.500" stroke="#60789c" stroke-width="0.800"/><path d="M3 13.500h15M10.500 10v9" stroke="#8fc0e8" stroke-width="1"/><circle cx="11" cy="9" r="1.700" fill="#111"/><path d="M13.500 10l-3 8M9 14.500l10-2.500M12 11l5 3" stroke="#2a7ad0" stroke-width="1.500" fill="none"/></svg>
<span class="t" style="left:208.40px;top:766.11px;font-size:14.7px;line-height:14.7px;color:#000;letter-spacing:-0.212px;">Big Class.jmp</span>
<svg class="b" style="left:185px;top:783.6999999999999px;" width="21" height="20" viewBox="0 0 21 20"><path d="M3.500 1h14v18h-14z" fill="#cde5f9" stroke="#6aa6dc" stroke-width="1"/><path d="M0.800 3c2-1.500 4-1.500 4 0M0.800 6c2-1.500 4-1.500 4 0M0.800 9c2-1.500 4-1.500 4 0M0.800 12c2-1.500 4-1.500 4 0M0.800 15c2-1.500 4-1.500 4 0M0.800 18c2-1.500 4-1.500 4 0" stroke="#d8b020" stroke-width="1.300" fill="none"/><rect x="6.500" y="2.500" width="9" height="8" fill="#5cc04a"/><path d="M6.500 5h9M6.500 7.700h9M9.500 2.500v8M12.500 2.500v8" stroke="#3a9a30" stroke-width="0.700"/><path d="M5 14h13" stroke="#8fc0e8" stroke-width="1"/><circle cx="11" cy="9" r="1.700" fill="#111"/><path d="M13.500 10l-3 8M9 14.500l10-2.500M12 11l5 3" stroke="#2a7ad0" stroke-width="1.500" fill="none"/></svg>
<div class="b" style="left:208.4px;top:783.6999999999999px;width:216px;height:22px;overflow:hidden;"><span class="t" style="left:0.00px;top:4.36px;font-size:14.7px;line-height:14.7px;color:#000;letter-spacing:0.080px;">Data Mining and Predictive Modeling.jrn</span></div>
<svg class="b" style="left:185px;top:805.65px;" width="21" height="20" viewBox="0 0 21 20"><path d="M3 1h11l4 4v14H3z" fill="#cde5f9" stroke="#6aa6dc" stroke-width="1"/><rect x="1" y="1.500" width="12" height="8.500" fill="#f4f8fc" stroke="#50688c" stroke-width="0.900"/><path d="M1 4.300h12M1 7.200h12M4 1.500v8.500M7 1.500v8.500M10 1.500v8.500" stroke="#60789c" stroke-width="0.800"/><path d="M3 13.500h15M10.500 10v9" stroke="#8fc0e8" stroke-width="1"/><circle cx="11" cy="9" r="1.700" fill="#111"/><path d="M13.500 10l-3 8M9 14.500l10-2.500M12 11l5 3" stroke="#2a7ad0" stroke-width="1.500" fill="none"/></svg>
<span class="t" style="left:208.40px;top:810.01px;font-size:14.7px;line-height:14.7px;color:#000;letter-spacing:0.140px;">Tablet Production.jmp</span>
<svg class="b" style="left:185px;top:827.5999999999999px;" width="21" height="20" viewBox="0 0 21 20"><path d="M3.500 1h14v18h-14z" fill="#cde5f9" stroke="#6aa6dc" stroke-width="1"/><path d="M0.800 3c2-1.500 4-1.500 4 0M0.800 6c2-1.500 4-1.500 4 0M0.800 9c2-1.500 4-1.500 4 0M0.800 12c2-1.500 4-1.500 4 0M0.800 15c2-1.500 4-1.500 4 0M0.800 18c2-1.500 4-1.500 4 0" stroke="#d8b020" stroke-width="1.300" fill="none"/><rect x="6.500" y="2.500" width="9" height="8" fill="#5cc04a"/><path d="M6.500 5h9M6.500 7.700h9M9.500 2.500v8M12.500 2.500v8" stroke="#3a9a30" stroke-width="0.700"/><path d="M5 14h13" stroke="#8fc0e8" stroke-width="1"/><circle cx="11" cy="9" r="1.700" fill="#111"/><path d="M13.500 10l-3 8M9 14.500l10-2.500M12 11l5 3" stroke="#2a7ad0" stroke-width="1.500" fill="none"/></svg>
<div class="b" style="left:208.4px;top:827.5999999999999px;width:216px;height:22px;overflow:hidden;"><span class="t" style="left:0.00px;top:4.36px;font-size:14.7px;line-height:14.7px;color:#000;letter-spacing:0.020px;">Automating your Analyses using JSL.jrn</span></div>
<svg class="b" style="left:185px;top:849.55px;" width="21" height="20" viewBox="0 0 21 20"><path d="M3.500 1h14v18h-14z" fill="#cde5f9" stroke="#6aa6dc" stroke-width="1"/><path d="M0.800 3c2-1.500 4-1.500 4 0M0.800 6c2-1.500 4-1.500 4 0M0.800 9c2-1.500 4-1.500 4 0M0.800 12c2-1.500 4-1.500 4 0M0.800 15c2-1.500 4-1.500 4 0M0.800 18c2-1.500 4-1.500 4 0" stroke="#d8b020" stroke-width="1.300" fill="none"/><rect x="6.500" y="2.500" width="9" height="8" fill="#5cc04a"/><path d="M6.500 5h9M6.500 7.700h9M9.500 2.500v8M12.500 2.500v8" stroke="#3a9a30" stroke-width="0.700"/><path d="M5 14h13" stroke="#8fc0e8" stroke-width="1"/><circle cx="11" cy="9" r="1.700" fill="#111"/><path d="M13.500 10l-3 8M9 14.500l10-2.500M12 11l5 3" stroke="#2a7ad0" stroke-width="1.500" fill="none"/></svg>
<span class="t" style="left:208.40px;top:853.91px;font-size:14.7px;line-height:14.7px;color:#8c8c8c;letter-spacing:-0.252px;">JMP on Tuesday Journal.jrn</span>
<svg class="b" style="left:185px;top:871.5px;" width="21" height="20" viewBox="0 0 21 20"><path d="M3.500 1h14v18h-14z" fill="#cde5f9" stroke="#6aa6dc" stroke-width="1"/><path d="M0.800 3c2-1.500 4-1.500 4 0M0.800 6c2-1.500 4-1.500 4 0M0.800 9c2-1.500 4-1.500 4 0M0.800 12c2-1.500 4-1.500 4 0M0.800 15c2-1.500 4-1.500 4 0M0.800 18c2-1.500 4-1.500 4 0" stroke="#d8b020" stroke-width="1.300" fill="none"/><rect x="6.500" y="2.500" width="9" height="8" fill="#5cc04a"/><path d="M6.500 5h9M6.500 7.700h9M9.500 2.500v8M12.500 2.500v8" stroke="#3a9a30" stroke-width="0.700"/><path d="M5 14h13" stroke="#8fc0e8" stroke-width="1"/><circle cx="11" cy="9" r="1.700" fill="#111"/><path d="M13.500 10l-3 8M9 14.500l10-2.500M12 11l5 3" stroke="#2a7ad0" stroke-width="1.500" fill="none"/></svg>
<span class="t" style="left:208.40px;top:875.86px;font-size:14.7px;line-height:14.7px;color:#8c8c8c;letter-spacing:-0.052px;">Machines of Fit.jrn</span>
<svg class="b" style="left:185px;top:893.4499999999999px;" width="22" height="20" viewBox="0 0 22 20"><rect x="1" y="0.500" width="11.500" height="16.500" rx="1" fill="#2fae34" stroke="#1c8a24" stroke-width="0.800"/><path d="M2 3h9.500M2 6h9.500M2 9h9.500M2 12h9.500M2 15h9.500" stroke="#8fe088" stroke-width="1.400"/><rect x="9" y="2" width="4" height="5" fill="#2fae34"/><circle cx="10.500" cy="7" r="1.800" fill="#111"/><path d="M13 8.500l-3.500 10M7.500 13.500l13-3.500M11 9.500l5.500 2.500" stroke="#2a7ad0" stroke-width="1.600" fill="none"/></svg>
<span class="t" style="left:208.40px;top:897.81px;font-size:14.7px;line-height:14.7px;color:#000;letter-spacing:-0.099px;">Revenue Analyses.jmpprj</span>
<svg class="b" style="left:185px;top:915.4px;" width="21" height="20" viewBox="0 0 21 20"><path d="M3 1h11l4 4v14H3z" fill="#cde5f9" stroke="#6aa6dc" stroke-width="1"/><rect x="1" y="1.500" width="12" height="8.500" fill="#f4f8fc" stroke="#50688c" stroke-width="0.900"/><path d="M1 4.300h12M1 7.200h12M4 1.500v8.500M7 1.500v8.500M10 1.500v8.500" stroke="#60789c" stroke-width="0.800"/><path d="M3 13.500h15M10.500 10v9" stroke="#8fc0e8" stroke-width="1"/><circle cx="11" cy="9" r="1.700" fill="#111"/><path d="M13.500 10l-3 8M9 14.500l10-2.500M12 11l5 3" stroke="#2a7ad0" stroke-width="1.500" fill="none"/></svg>
<span class="t" style="left:208.40px;top:919.76px;font-size:14.7px;line-height:14.7px;color:#000;letter-spacing:-0.079px;">Renewal.jmp</span>
<svg class="b" style="left:185px;top:937.3499999999999px;" width="21" height="20" viewBox="0 0 21 20"><path d="M3 1h11l4 4v14H3z" fill="#cde5f9" stroke="#6aa6dc" stroke-width="1"/><rect x="1" y="1.500" width="12" height="8.500" fill="#f4f8fc" stroke="#50688c" stroke-width="0.900"/><path d="M1 4.300h12M1 7.200h12M4 1.500v8.500M7 1.500v8.500M10 1.500v8.500" stroke="#60789c" stroke-width="0.800"/><path d="M3 13.500h15M10.500 10v9" stroke="#8fc0e8" stroke-width="1"/><circle cx="11" cy="9" r="1.700" fill="#111"/><path d="M13.500 10l-3 8M9 14.500l10-2.500M12 11l5 3" stroke="#2a7ad0" stroke-width="1.500" fill="none"/></svg>
<span class="t" style="left:208.40px;top:941.71px;font-size:14.7px;line-height:14.7px;color:#000;letter-spacing:-0.156px;">NSR Target.jmp</span>
<svg class="b" style="left:185px;top:959.3px;" width="21" height="20" viewBox="0 0 21 20"><path d="M3 1h11l4 4v14H3z" fill="#cde5f9" stroke="#6aa6dc" stroke-width="1"/><rect x="1" y="1.500" width="12" height="8.500" fill="#f4f8fc" stroke="#50688c" stroke-width="0.900"/><path d="M1 4.300h12M1 7.200h12M4 1.500v8.500M7 1.500v8.500M10 1.500v8.500" stroke="#60789c" stroke-width="0.800"/><path d="M3 13.500h15M10.500 10v9" stroke="#8fc0e8" stroke-width="1"/><circle cx="11" cy="9" r="1.700" fill="#111"/><path d="M13.500 10l-3 8M9 14.500l10-2.500M12 11l5 3" stroke="#2a7ad0" stroke-width="1.500" fill="none"/></svg>
<span class="t" style="left:208.40px;top:963.66px;font-size:14.7px;line-height:14.7px;color:#8c8c8c;letter-spacing:-0.156px;">NSR Target.jmp</span>
<div class="b" style="left:185px;top:978px;width:20px;height:4px;background:#c9d9ea;"></div>
<div class="b" style="left:425px;top:737px;width:21px;height:245px;background:#f0f0f0;"></div>
<svg class="b" style="left:425px;top:740px;" width="20" height="18" viewBox="0 0 20 18"><path d="M5.500 12l4.500-4.500 4.500 4.500" stroke="#8a8a8a" stroke-width="1.600" fill="none"/></svg>
<div class="b" style="left:425px;top:759px;width:20px;height:10px;background:#cdcdcd;"></div>
<svg class="b" style="left:425px;top:962px;" width="20" height="18" viewBox="0 0 20 18"><path d="M5.500 6l4.500 4.500 4.500-4.500" stroke="#8a8a8a" stroke-width="1.600" fill="none"/></svg>
<div class="b" style="left:157px;top:982px;width:268px;height:21px;background:#f0f0f0;"></div>
<div class="b" style="left:178px;top:982px;width:78.5px;height:21px;background:#cdcdcd;"></div>
<svg class="b" style="left:157px;top:982px;" width="20" height="21" viewBox="0 0 20 21"><path d="M12 6.0l-4.500 4.500 4.500 4.500" stroke="#8a8a8a" stroke-width="1.600" fill="none"/></svg>
<svg class="b" style="left:405px;top:982px;" width="20" height="21" viewBox="0 0 20 21"><path d="M8 6.0l4.500 4.500-4.500 4.500" stroke="#8a8a8a" stroke-width="1.600" fill="none"/></svg>
<div class="b" style="left:425px;top:982px;width:21px;height:21px;background:#f0f0f0;"></div>
<div class="b" style="left:449px;top:86px;width:1471px;height:37px;background:#fbfbfd;"></div>
<div class="b" style="left:449px;top:122.5px;width:1471px;height:1px;background:#dcdcdc;"></div>
<div class="b" style="left:449px;top:123.5px;width:1471px;height:880.5px;background:#f8f8f8;"></div>
<div class="b" style="left:450px;top:89px;width:122.5px;height:33.5px;background:#e5e5e5;border:1px solid #d4d4d4;box-sizing:border-box;border-radius:4px 4px 0 0;border-bottom:none;"></div>
<svg class="b" style="left:454px;top:94px;opacity:0.75;" width="23" height="24" viewBox="0 0 23 24"><path d="M1 1h15l5 5v17H4V12H1z" fill="#d4e7f8" stroke="#5a96d0" stroke-width="1"/><rect x="1" y="1" width="14" height="11" fill="#fff" stroke="#6a8ab8" stroke-width="1"/><path d="M1 4.500h14M1 8h14M4.500 1v11M8 1v11M11.500 1v11" stroke="#7a9ac8" stroke-width="0.800"/><path d="M4 17h17M12 12v11" stroke="#8ab8e0" stroke-width="1"/><circle cx="12.500" cy="11" r="2" fill="#111"/><path d="M15 12l-3 9M12 16l9-2" stroke="#2a7ad0" stroke-width="1.600" fill="none"/></svg>
<span class="t" style="left:480.00px;top:97.86px;font-size:18.6px;line-height:18.6px;color:#757575;letter-spacing:-0.914px;">Big...ss*</span>
<svg class="b" style="left:550px;top:98.5px;" width="14" height="14" viewBox="0 0 14 14"><path d="M2.8 2.8L11.2 11.2M11.2 2.8L2.8 11.2" stroke="#b4b4b4" stroke-width="1.8"/></svg>
<div class="b" style="left:576px;top:89px;width:167px;height:33.5px;background:#e5e5e5;border:1px solid #d4d4d4;box-sizing:border-box;border-radius:4px 4px 0 0;border-bottom:none;"></div>
<svg class="b" style="left:579px;top:94px;opacity:0.75;" width="21" height="24" viewBox="0 0 21 24"><rect x="0.500" y="0" width="1.800" height="24" fill="#4d7a3a"/><rect x="2" y="1.00" width="9" height="2.300" fill="#8cc060"/><rect x="2" y="3.75" width="12" height="2.300" fill="#8cc060"/><rect x="2" y="6.50" width="13" height="2.300" fill="#8cc060"/><rect x="2" y="9.25" width="18" height="2.300" fill="#8cc060"/><rect x="2" y="12.00" width="18" height="2.300" fill="#8cc060"/><rect x="2" y="14.75" width="13" height="2.300" fill="#8cc060"/><rect x="2" y="17.50" width="10" height="2.300" fill="#8cc060"/><rect x="2" y="20.25" width="7" height="2.300" fill="#8cc060"/></svg>
<span class="t" style="left:603.00px;top:97.86px;font-size:18.6px;line-height:18.6px;color:#757575;letter-spacing:-0.482px;">Big Cl...ution</span>
<svg class="b" style="left:719.7px;top:98.5px;" width="14" height="14" viewBox="0 0 14 14"><path d="M2.8 2.8L11.2 11.2M11.2 2.8L2.8 11.2" stroke="#b4b4b4" stroke-width="1.8"/></svg>
<div class="b" style="left:745.7px;top:89px;width:231.0px;height:33.5px;background:#e5e5e5;border:1px solid #d4d4d4;box-sizing:border-box;border-radius:4px 4px 0 0;border-bottom:none;"></div>
<svg class="b" style="left:746px;top:94px;opacity:0.75;" width="25" height="25" viewBox="0 0 25 25"><rect x="1" y="0" width="23" height="23" fill="#fff"/><text x="4" y="9" font-family="Liberation Serif,serif" font-style="italic" font-size="10" fill="#222">y</text><text x="17" y="22" font-family="Liberation Serif,serif" font-style="italic" font-size="10" fill="#222">x</text><path d="M1 0v23.500h23.500" stroke="#4a6a9c" stroke-width="1.500" fill="none"/></svg>
<span class="t" style="left:773.00px;top:97.86px;font-size:18.6px;line-height:18.6px;color:#757575;letter-spacing:-0.530px;">Big Class ... by height</span>
<svg class="b" style="left:953px;top:98.5px;" width="14" height="14" viewBox="0 0 14 14"><path d="M2.8 2.8L11.2 11.2M11.2 2.8L2.8 11.2" stroke="#b4b4b4" stroke-width="1.8"/></svg>
<div class="b" style="left:979px;top:89px;width:233.5px;height:33.5px;background:#e5e5e5;border:1px solid #d4d4d4;box-sizing:border-box;border-radius:4px 4px 0 0;border-bottom:none;"></div>
<svg class="b" style="left:980.5px;top:94px;opacity:0.75;" width="25" height="25" viewBox="0 0 25 25"><rect x="1" y="0" width="23" height="23" fill="#fff"/><path d="M3 17L9 10Q14 4 17 5L23 9" stroke="#3a82c8" stroke-width="1.300" fill="none"/><path d="M3 6L9 12.500Q13 18 16 17.500L23 13.500" stroke="#d8503a" stroke-width="1.300" fill="none"/><path d="M1 0v23.500h23.500" stroke="#4a6a9c" stroke-width="1.500" fill="none"/></svg>
<span class="t" style="left:1006.70px;top:97.86px;font-size:18.6px;line-height:18.6px;color:#757575;letter-spacing:-0.602px;">Big Class ...ht, weight</span>
<svg class="b" style="left:1188.7px;top:98.5px;" width="14" height="14" viewBox="0 0 14 14"><path d="M2.8 2.8L11.2 11.2M11.2 2.8L2.8 11.2" stroke="#b4b4b4" stroke-width="1.8"/></svg>
<div class="b" style="left:1214px;top:89px;width:215.5px;height:33.5px;background:#e5e5e5;border:1px solid #d4d4d4;box-sizing:border-box;border-radius:4px 4px 0 0;border-bottom:none;"></div>
<svg class="b" style="left:1215px;top:94px;opacity:0.75;" width="25" height="25" viewBox="0 0 25 25"><rect x="1" y="0" width="23" height="23" fill="#fff"/><path d="M3 20c6 0 7-2 9-8s3-8 10-8" stroke="#555" stroke-width="1.400" fill="none"/><path d="M1 0v23.500h23.500" stroke="#4a6a9c" stroke-width="1.500" fill="none"/></svg>
<span class="t" style="left:1241.00px;top:97.86px;font-size:18.6px;line-height:18.6px;color:#757575;letter-spacing:-0.640px;">Big Class...y weight</span>
<svg class="b" style="left:1407.5px;top:98.5px;" width="14" height="14" viewBox="0 0 14 14"><path d="M2.8 2.8L11.2 11.2M11.2 2.8L2.8 11.2" stroke="#b4b4b4" stroke-width="1.8"/></svg>
<div class="b" style="left:1432.5px;top:89px;width:177.5px;height:33.5px;background:#e5e5e5;border:1px solid #d4d4d4;box-sizing:border-box;border-radius:4px 4px 0 0;border-bottom:none;"></div>
<svg class="b" style="left:1435px;top:94px;opacity:0.75;" width="23" height="23" viewBox="0 0 23 23"><rect x="0.700" y="0.700" width="21.600" height="21.600" fill="#f4f8ec" stroke="#9aaa7a" stroke-width="1.300"/><path d="M11.500 1v21M1 11.500h21" stroke="#9aaa7a" stroke-width="1.300"/><g fill="#7ab84a"><rect x="3" y="3" width="1.500" height="6"/><rect x="5.500" y="5" width="1.500" height="4"/><rect x="8" y="2" width="1.500" height="7"/><rect x="14" y="4" width="1.500" height="5"/><rect x="16.500" y="6" width="1.500" height="3"/><rect x="19" y="3" width="1.500" height="6"/><rect x="3" y="15" width="1.500" height="5"/><rect x="5.500" y="13" width="1.500" height="7"/><rect x="8" y="16" width="1.500" height="4"/><rect x="14" y="14" width="1.500" height="6"/><rect x="16.500" y="16" width="1.500" height="4"/><rect x="19" y="13" width="1.500" height="7"/></g></svg>
<span class="t" style="left:1460.60px;top:97.86px;font-size:18.6px;line-height:18.6px;color:#757575;letter-spacing:-0.726px;">Big Cl...Builder</span>
<svg class="b" style="left:1586px;top:98.5px;" width="14" height="14" viewBox="0 0 14 14"><path d="M2.8 2.8L11.2 11.2M11.2 2.8L2.8 11.2" stroke="#b4b4b4" stroke-width="1.8"/></svg>
<div class="b" style="left:1611px;top:87px;width:289px;height:36.5px;background:#fff;border-top:3px solid #ee8848;box-sizing:border-box;border-right:1px solid #d0d0d0;"></div>
<svg class="b" style="left:1613px;top:94.5px;" width="25" height="25" viewBox="0 0 25 25"><rect x="1" y="0" width="23" height="23" fill="#fff"/><path d="M3 17L9 10Q14 4 17 5L23 9" stroke="#3a82c8" stroke-width="1.300" fill="none"/><path d="M3 6L9 12.500Q13 18 16 17.500L23 13.500" stroke="#d8503a" stroke-width="1.300" fill="none"/><path d="M1 0v23.500h23.500" stroke="#4a6a9c" stroke-width="1.500" fill="none"/></svg>
<span class="t" style="left:1639.50px;top:97.86px;font-size:18.6px;line-height:18.6px;color:#000;letter-spacing:-0.506px;">Big Class - ...ght by name</span>
<svg class="b" style="left:1853px;top:99px;" width="15" height="15" viewBox="0 0 15 15"><rect x="1.2" y="1.2" width="12.6" height="12.6" fill="none" stroke="#222" stroke-width="2"/></svg>
<svg class="b" style="left:1876.5px;top:99px;" width="14" height="14" viewBox="0 0 14 14"><path d="M2.7 2.7L11.3 11.3M11.3 2.7L2.7 11.3" stroke="#222" stroke-width="2.4"/></svg>
<svg class="b" style="left:1903px;top:100px;" width="13" height="13" viewBox="0 0 13 13"><path d="M1 1h11" stroke="#666" stroke-width="1.6"/><path d="M1 4h11l-5.500 8z" fill="#666"/></svg>
<svg class="b" style="left:456.5px;top:139.5px;" width="11.5" height="11.5" viewBox="0 0 11.5 11.5"><path d="M10.5 0.5v10.0h-10.0z" fill="#b8b8b8" stroke="#8a8a8a" stroke-width="1"/></svg>
<div class="b" style="left:469.5px;top:128px;width:1444px;height:34.5px;background:#ebebeb;border:1px solid #c4c4c4;box-sizing:border-box;"></div>
<svg class="b" style="left:474.3px;top:138.2px;" width="17" height="14.5" viewBox="0 0 17 14.5"><rect x="0.5" y="0.5" width="16" height="13.5" rx="2.5" fill="#fbf3f3" stroke="#c9c1c1"/><path d="M4.0 4.8h9l-4.500 5.500z" fill="#d31515"/></svg>
<span class="t" style="left:494.50px;top:135.18px;font-size:22px;line-height:22px;color:#000;letter-spacing:0.217px;font-weight:700;">Graph Builder</span>
<div class="b" style="left:471.3px;top:167px;width:75.2px;height:25px;background:#e1e1e1;border:1px solid #a0a0a0;box-sizing:border-box;"></div>
<span class="t" style="left:491.15px;top:172.90px;font-size:15px;line-height:15px;color:#000;letter-spacing:-0.090px;">Undo</span>
<div class="b" style="left:551px;top:167px;width:75px;height:25px;background:#e1e1e1;border:1px solid #a0a0a0;box-sizing:border-box;"></div>
<span class="t" style="left:556.00px;top:172.90px;font-size:15px;line-height:15px;color:#000;letter-spacing:-0.335px;">Start Over</span>
<div class="b" style="left:631px;top:167px;width:75px;height:25px;background:#e1e1e1;border:1px solid #a0a0a0;box-sizing:border-box;"></div>
<span class="t" style="left:650.75px;top:172.90px;font-size:15px;line-height:15px;color:#000;letter-spacing:-0.090px;">Done</span>
<svg class="b" style="left:470px;top:200px;" width="17" height="14.5" viewBox="0 0 17 14.5"><rect x="0.5" y="0.5" width="16" height="13.5" rx="2.5" fill="#fbf3f3" stroke="#c9c1c1"/><path d="M4.0 4.8h9l-4.500 5.500z" fill="#d31515"/></svg>
<span class="t" style="left:489.70px;top:203.70px;font-size:17.6px;line-height:17.6px;color:#000;letter-spacing:-0.036px;">5 Columns</span>
<div class="b" style="left:468.5px;top:223px;width:344px;height:135.5px;background:#fff;border:1px solid #a6a6a6;box-sizing:border-box;"></div>
<svg class="b" style="left:474px;top:231.3px;" width="16" height="16" viewBox="0 0 16 16"><rect x="1" y="6" width="4" height="9" fill="#c8321e"/><rect x="5.500" y="1" width="4.500" height="14" fill="#c8321e"/><rect x="10.500" y="8" width="4.500" height="7" fill="#c8321e"/><rect x="1" y="13" width="14" height="2" fill="#b02a18"/></svg>
<span class="t" style="left:495.70px;top:231.90px;font-size:17.6px;line-height:17.6px;color:#000;letter-spacing:-0.182px;">name</span>
<svg class="b" style="left:474px;top:257.55px;" width="16" height="16" viewBox="0 0 16 16"><rect x="1" y="10" width="4.500" height="5" fill="#5fae5a"/><rect x="5.500" y="6" width="4.500" height="9" fill="#5fae5a"/><rect x="10" y="2" width="5" height="13" fill="#5fae5a"/></svg>
<span class="t" style="left:495.70px;top:258.15px;font-size:17.6px;line-height:17.6px;color:#000;letter-spacing:-0.122px;">age</span>
<svg class="b" style="left:474px;top:283.8px;" width="16" height="16" viewBox="0 0 16 16"><rect x="1" y="6" width="4" height="9" fill="#c8321e"/><rect x="5.500" y="1" width="4.500" height="14" fill="#c8321e"/><rect x="10.500" y="8" width="4.500" height="7" fill="#c8321e"/><rect x="1" y="13" width="14" height="2" fill="#b02a18"/></svg>
<span class="t" style="left:495.70px;top:284.40px;font-size:17.6px;line-height:17.6px;color:#000;letter-spacing:-0.630px;">sex</span>
<svg class="b" style="left:474px;top:310.05px;" width="16" height="16" viewBox="0 0 16 16"><path d="M1 15L15 1v14z" fill="#3a68bc"/></svg>
<span class="t" style="left:495.70px;top:310.65px;font-size:17.6px;line-height:17.6px;color:#000;letter-spacing:0.341px;">height</span>
<svg class="b" style="left:474px;top:336.3px;" width="16" height="16" viewBox="0 0 16 16"><path d="M1 15L15 1v14z" fill="#3a68bc"/></svg>
<span class="t" style="left:495.70px;top:336.90px;font-size:17.6px;line-height:17.6px;color:#000;letter-spacing:0.271px;">weight</span>
<svg class="b" style="left:472px;top:377px;" width="11.5" height="11.5" viewBox="0 0 11.5 11.5"><path d="M10.5 0.5v10.0h-10.0z" fill="#b8b8b8" stroke="#8a8a8a" stroke-width="1"/></svg>
<div class="b" style="left:484px;top:368.4px;width:287.5px;height:27.2px;background:#e9e9e9;border:1px solid #d3d3d3;box-sizing:border-box;"></div>
<svg class="b" style="left:489.3px;top:374.8px;" width="16.6" height="14.5" viewBox="0 0 16.6 14.5"><rect x="0.5" y="0.5" width="15.600000000000001" height="13.5" rx="2.5" fill="#fbf3f3" stroke="#c9c1c1"/><path d="M3.8 4.8h9l-4.500 5.500z" fill="#d31515"/></svg>
<span class="t" style="left:509.50px;top:372.51px;font-size:18.3px;line-height:18.3px;color:#000;letter-spacing:-0.570px;font-weight:700;">Points</span>
<span class="t" style="left:476.00px;top:405.74px;font-size:13.3px;line-height:13.3px;color:#1a1a1a;letter-spacing:-0.304px;">Summary Statistic</span>
<div class="b" style="left:617px;top:401.90000000000003px;width:151px;height:24.9px;background:linear-gradient(#f2f2f2,#e3e3e3);border:1px solid #adadad;box-sizing:border-box;"></div>
<span class="t" style="left:625.40px;top:408.44px;font-size:13.3px;line-height:13.3px;color:#000;letter-spacing:-0.124px;">None</span>
<svg class="b" style="left:752px;top:410.35px;" width="10" height="8" viewBox="0 0 10 8"><path d="M1.200 1.500l3.600 3.800 3.600-3.800" stroke="#505050" stroke-width="1.400" fill="none"/></svg>
<span class="t" style="left:476.00px;top:437.34px;font-size:13.3px;line-height:13.3px;color:#1a1a1a;letter-spacing:-0.098px;">Error Interval</span>
<div class="b" style="left:617px;top:433.90000000000003px;width:151px;height:24.9px;background:linear-gradient(#f2f2f2,#e3e3e3);border:1px solid #adadad;box-sizing:border-box;"></div>
<span class="t" style="left:625.40px;top:440.74px;font-size:13.3px;line-height:13.3px;color:#000;letter-spacing:-0.215px;">Auto</span>
<svg class="b" style="left:752px;top:442.35px;" width="10" height="8" viewBox="0 0 10 8"><path d="M1.200 1.500l3.600 3.800 3.600-3.800" stroke="#505050" stroke-width="1.400" fill="none"/></svg>
<span class="t" style="left:476.00px;top:468.44px;font-size:13.3px;line-height:13.3px;color:#1a1a1a;letter-spacing:-0.313px;">Interval Style</span>
<div class="b" style="left:617px;top:465.0px;width:151px;height:24.9px;background:linear-gradient(#f2f2f2,#e3e3e3);border:1px solid #adadad;box-sizing:border-box;"></div>
<span class="t" style="left:625.40px;top:471.74px;font-size:13.3px;line-height:13.3px;color:#000;letter-spacing:-0.161px;">Error Bar</span>
<svg class="b" style="left:752px;top:473.45px;" width="10" height="8" viewBox="0 0 10 8"><path d="M1.200 1.500l3.600 3.800 3.600-3.800" stroke="#505050" stroke-width="1.400" fill="none"/></svg>
<span class="t" style="left:476.00px;top:499.74px;font-size:13.3px;line-height:13.3px;color:#1a1a1a;letter-spacing:-0.220px;">Jitter</span>
<div class="b" style="left:617px;top:495.90000000000003px;width:151px;height:24.9px;background:linear-gradient(#f2f2f2,#e3e3e3);border:1px solid #adadad;box-sizing:border-box;"></div>
<span class="t" style="left:625.40px;top:502.34px;font-size:13.3px;line-height:13.3px;color:#000;letter-spacing:-0.215px;">Auto</span>
<svg class="b" style="left:752px;top:504.35px;" width="10" height="8" viewBox="0 0 10 8"><path d="M1.200 1.500l3.600 3.800 3.600-3.800" stroke="#505050" stroke-width="1.400" fill="none"/></svg>
<span class="t" style="left:476.00px;top:528.74px;font-size:13.3px;line-height:13.3px;color:#1a1a1a;letter-spacing:-0.133px;">Jitter Limit</span>
<div class="b" style="left:626.3px;top:532.6px;width:133px;height:9.4px;background:#fff;border:1px solid #8e8e8e;box-sizing:border-box;border-radius:5px;"></div>
<svg class="b" style="left:684px;top:525px;" width="19" height="25" viewBox="0 0 19 25"><path d="M9.500 1L17.300 12.200 9.500 23.400 1.700 12.200z" fill="#dcebfa" stroke="#6d9bd1" stroke-width="1.200"/></svg>
<span class="t" style="left:476.00px;top:552.94px;font-size:13.3px;line-height:13.3px;color:#1a1a1a;letter-spacing:-0.107px;">Variables</span>
<svg class="b" style="left:620.5px;top:553px;" width="10" height="15" viewBox="0 0 10 15"><path d="M1 1.500l7 6-7 6z" fill="#f4f4f4" stroke="#8a8a8a" stroke-width="1.300"/></svg>
<svg class="b" style="left:472px;top:583.5px;" width="11.5" height="11.5" viewBox="0 0 11.5 11.5"><path d="M10.5 0.5v10.0h-10.0z" fill="#b8b8b8" stroke="#8a8a8a" stroke-width="1"/></svg>
<div class="b" style="left:484px;top:575.2px;width:287.5px;height:26.5px;background:#e9e9e9;border:1px solid #d3d3d3;box-sizing:border-box;"></div>
<svg class="b" style="left:489.3px;top:581.2px;" width="16.6" height="14.5" viewBox="0 0 16.6 14.5"><rect x="0.5" y="0.5" width="15.600000000000001" height="13.5" rx="2.5" fill="#fbf3f3" stroke="#c9c1c1"/><path d="M3.8 4.8h9l-4.500 5.500z" fill="#d31515"/></svg>
<span class="t" style="left:509.50px;top:578.91px;font-size:18.3px;line-height:18.3px;color:#000;letter-spacing:-0.171px;font-weight:700;">Line (right)</span>
<span class="t" style="left:476.00px;top:608.94px;font-size:13.3px;line-height:13.3px;color:#1a1a1a;letter-spacing:0.016px;">Row order</span>
<div class="b" style="left:618px;top:610.4px;width:16px;height:14.5px;background:#fff;border:1px solid #7a7a7a;box-sizing:border-box;"></div>
<span class="t" style="left:476.00px;top:636.14px;font-size:13.3px;line-height:13.3px;color:#1a1a1a;letter-spacing:-0.229px;">Connection</span>
<div class="b" style="left:617px;top:631.6999999999999px;width:151px;height:24.9px;background:linear-gradient(#f2f2f2,#e3e3e3);border:1px solid #adadad;box-sizing:border-box;"></div>
<span class="t" style="left:625.40px;top:638.74px;font-size:13.3px;line-height:13.3px;color:#000;letter-spacing:-0.537px;">Line</span>
<svg class="b" style="left:752px;top:640.15px;" width="10" height="8" viewBox="0 0 10 8"><path d="M1.200 1.500l3.600 3.800 3.600-3.800" stroke="#505050" stroke-width="1.400" fill="none"/></svg>
<span class="t" style="left:476.00px;top:668.04px;font-size:13.3px;line-height:13.3px;color:#1a1a1a;letter-spacing:-0.304px;">Summary Statistic</span>
<div class="b" style="left:617px;top:663.5999999999999px;width:151px;height:24.9px;background:linear-gradient(#f2f2f2,#e3e3e3);border:1px solid #adadad;box-sizing:border-box;"></div>
<span class="t" style="left:625.40px;top:670.74px;font-size:13.3px;line-height:13.3px;color:#000;letter-spacing:-0.068px;">Mean</span>
<svg class="b" style="left:752px;top:672.05px;" width="10" height="8" viewBox="0 0 10 8"><path d="M1.200 1.500l3.600 3.800 3.600-3.800" stroke="#505050" stroke-width="1.400" fill="none"/></svg>
<span class="t" style="left:476.00px;top:699.04px;font-size:13.3px;line-height:13.3px;color:#1a1a1a;letter-spacing:-0.622px;">Fill</span>
<div class="b" style="left:617px;top:694.6999999999999px;width:151px;height:24.9px;background:linear-gradient(#f2f2f2,#e3e3e3);border:1px solid #adadad;box-sizing:border-box;"></div>
<span class="t" style="left:625.40px;top:701.74px;font-size:13.3px;line-height:13.3px;color:#000;letter-spacing:-0.124px;">None</span>
<svg class="b" style="left:752px;top:703.15px;" width="10" height="8" viewBox="0 0 10 8"><path d="M1.200 1.500l3.600 3.800 3.600-3.800" stroke="#505050" stroke-width="1.400" fill="none"/></svg>
<span class="t" style="left:476.00px;top:730.24px;font-size:13.3px;line-height:13.3px;color:#1a1a1a;letter-spacing:-0.098px;">Error Interval</span>
<div class="b" style="left:617px;top:725.8px;width:151px;height:24.9px;background:linear-gradient(#f2f2f2,#e3e3e3);border:1px solid #adadad;box-sizing:border-box;"></div>
<span class="t" style="left:625.40px;top:732.74px;font-size:13.3px;line-height:13.3px;color:#000;letter-spacing:-0.215px;">Auto</span>
<svg class="b" style="left:752px;top:734.25px;" width="10" height="8" viewBox="0 0 10 8"><path d="M1.200 1.500l3.600 3.800 3.600-3.800" stroke="#505050" stroke-width="1.400" fill="none"/></svg>
<span class="t" style="left:476.00px;top:761.14px;font-size:13.3px;line-height:13.3px;color:#1a1a1a;letter-spacing:-0.313px;">Interval Style</span>
<div class="b" style="left:617px;top:756.5999999999999px;width:151px;height:24.9px;background:linear-gradient(#f2f2f2,#e3e3e3);border:1px solid #adadad;box-sizing:border-box;"></div>
<span class="t" style="left:625.40px;top:764.14px;font-size:13.3px;line-height:13.3px;color:#000;letter-spacing:-0.161px;">Error Bar</span>
<svg class="b" style="left:752px;top:765.05px;" width="10" height="8" viewBox="0 0 10 8"><path d="M1.200 1.500l3.600 3.800 3.600-3.800" stroke="#505050" stroke-width="1.400" fill="none"/></svg>
<span class="t" style="left:476.00px;top:792.74px;font-size:13.3px;line-height:13.3px;color:#1a1a1a;letter-spacing:-0.208px;">Missing Factors</span>
<div class="b" style="left:617px;top:787.6999999999999px;width:151px;height:24.9px;background:linear-gradient(#f2f2f2,#e3e3e3);border:1px solid #adadad;box-sizing:border-box;"></div>
<span class="t" style="left:625.40px;top:795.24px;font-size:13.3px;line-height:13.3px;color:#000;letter-spacing:-0.468px;">Skip</span>
<svg class="b" style="left:752px;top:796.15px;" width="10" height="8" viewBox="0 0 10 8"><path d="M1.200 1.500l3.600 3.800 3.600-3.800" stroke="#505050" stroke-width="1.400" fill="none"/></svg>
<span class="t" style="left:476.00px;top:823.74px;font-size:13.3px;line-height:13.3px;color:#1a1a1a;letter-spacing:-0.176px;">Missing Values</span>
<div class="b" style="left:617px;top:819.5999999999999px;width:151px;height:24.9px;background:linear-gradient(#f2f2f2,#e3e3e3);border:1px solid #adadad;box-sizing:border-box;"></div>
<span class="t" style="left:625.40px;top:827.24px;font-size:13.3px;line-height:13.3px;color:#000;letter-spacing:-0.169px;">Connect Through</span>
<svg class="b" style="left:752px;top:828.05px;" width="10" height="8" viewBox="0 0 10 8"><path d="M1.200 1.500l3.600 3.800 3.600-3.800" stroke="#505050" stroke-width="1.400" fill="none"/></svg>
<span class="t" style="left:476.00px;top:849.24px;font-size:13.3px;line-height:13.3px;color:#1a1a1a;letter-spacing:-0.107px;">Variables</span>
<svg class="b" style="left:620.5px;top:849.5px;" width="10" height="15" viewBox="0 0 10 15"><path d="M1 1.500l7 6-7 6z" fill="#f4f4f4" stroke="#8a8a8a" stroke-width="1.300"/></svg>
<div class="b" style="left:817.5px;top:165px;width:36.5px;height:36.5px;background:#a9b7d6;box-sizing:border-box;border:1.5px solid #3c86d6;border-bottom-width:2.500px;"></div>
<svg class="b" style="left:820px;top:167px;" width="33" height="33" viewBox="0 0 33 33"><rect x="18" y="2" width="3.6" height="3.6" fill="#3f5fb0" stroke="#5a6fb8" stroke-width="0.500"/><rect x="12" y="9" width="3.6" height="3.6" fill="#3f5fb0" stroke="#5a6fb8" stroke-width="0.500"/><rect x="29" y="11" width="3.6" height="3.6" fill="#3f5fb0" stroke="#5a6fb8" stroke-width="0.500"/><rect x="21" y="15" width="3.6" height="3.6" fill="#3f5fb0" stroke="#5a6fb8" stroke-width="0.500"/><rect x="6" y="17" width="3.6" height="3.6" fill="#3f5fb0" stroke="#5a6fb8" stroke-width="0.500"/><rect x="28" y="21" width="3.6" height="3.6" fill="#3f5fb0" stroke="#5a6fb8" stroke-width="0.500"/><rect x="13" y="23" width="3.6" height="3.6" fill="#3f5fb0" stroke="#5a6fb8" stroke-width="0.500"/><rect x="19" y="27" width="3.6" height="3.6" fill="#3f5fb0" stroke="#5a6fb8" stroke-width="0.500"/></svg>
<svg class="b" style="left:857px;top:167px;" width="33" height="33" viewBox="0 0 33 33"><path d="M1 0v31h31" stroke="#9a9a9a" stroke-width="1.6" fill="none"/><rect x="8" y="5" width="3.4" height="3.4" fill="#8a9fd8" stroke="#5a6fb8" stroke-width="0.500"/><rect x="17" y="2" width="3.4" height="3.4" fill="#8a9fd8" stroke="#5a6fb8" stroke-width="0.500"/><rect x="21" y="10" width="3.4" height="3.4" fill="#8a9fd8" stroke="#5a6fb8" stroke-width="0.500"/><rect x="26" y="12" width="3.4" height="3.4" fill="#8a9fd8" stroke="#5a6fb8" stroke-width="0.500"/><rect x="3" y="20" width="3.4" height="3.4" fill="#8a9fd8" stroke="#5a6fb8" stroke-width="0.500"/><rect x="10" y="19" width="3.4" height="3.4" fill="#8a9fd8" stroke="#5a6fb8" stroke-width="0.500"/><rect x="20" y="23" width="3.4" height="3.4" fill="#8a9fd8" stroke="#5a6fb8" stroke-width="0.500"/><rect x="11" y="27" width="3.4" height="3.4" fill="#8a9fd8" stroke="#5a6fb8" stroke-width="0.500"/><path d="M2 14c5-4 8-3 13 1s10 5 16 0" stroke="#3a55b0" stroke-width="1.8" fill="none"/></svg>
<svg class="b" style="left:894.4px;top:167px;" width="33" height="33" viewBox="0 0 33 33"><path d="M1 0v31h31" stroke="#9a9a9a" stroke-width="1.6" fill="none"/><rect x="18" y="2" width="3.4" height="3.4" fill="#8a9fd8" stroke="#5a6fb8" stroke-width="0.500"/><rect x="6" y="10" width="3.4" height="3.4" fill="#8a9fd8" stroke="#5a6fb8" stroke-width="0.500"/><rect x="14" y="7" width="3.4" height="3.4" fill="#8a9fd8" stroke="#5a6fb8" stroke-width="0.500"/><rect x="26" y="14" width="3.4" height="3.4" fill="#8a9fd8" stroke="#5a6fb8" stroke-width="0.500"/><rect x="21" y="17" width="3.4" height="3.4" fill="#8a9fd8" stroke="#5a6fb8" stroke-width="0.500"/><rect x="3" y="16" width="3.4" height="3.4" fill="#8a9fd8" stroke="#5a6fb8" stroke-width="0.500"/><rect x="14" y="22" width="3.4" height="3.4" fill="#8a9fd8" stroke="#5a6fb8" stroke-width="0.500"/><rect x="9" y="26" width="3.4" height="3.4" fill="#8a9fd8" stroke="#5a6fb8" stroke-width="0.500"/><path d="M2 23L29 9" stroke="#1f3da0" stroke-width="2.600"/></svg>
<svg class="b" style="left:932px;top:167px;" width="33" height="33" viewBox="0 0 33 33"><path d="M1 0v31h31" stroke="#9a9a9a" stroke-width="1.6" fill="none"/><rect x="15" y="1" width="3.4" height="3.4" fill="#8a9fd8" stroke="#5a6fb8" stroke-width="0.500"/><rect x="5" y="6" width="3.4" height="3.4" fill="#8a9fd8" stroke="#5a6fb8" stroke-width="0.500"/><rect x="9" y="8" width="3.4" height="3.4" fill="#8a9fd8" stroke="#5a6fb8" stroke-width="0.500"/><rect x="26" y="9" width="3.4" height="3.4" fill="#8a9fd8" stroke="#5a6fb8" stroke-width="0.500"/><rect x="19" y="14" width="3.4" height="3.4" fill="#8a9fd8" stroke="#5a6fb8" stroke-width="0.500"/><rect x="26" y="19" width="3.4" height="3.4" fill="#8a9fd8" stroke="#5a6fb8" stroke-width="0.500"/><rect x="11" y="23" width="3.4" height="3.4" fill="#8a9fd8" stroke="#5a6fb8" stroke-width="0.500"/><rect x="5" y="26" width="3.4" height="3.4" fill="#8a9fd8" stroke="#5a6fb8" stroke-width="0.500"/><rect x="17" y="26" width="3.4" height="3.4" fill="#8a9fd8" stroke="#5a6fb8" stroke-width="0.500"/><rect x="22" y="28" width="3.4" height="3.4" fill="#8a9fd8" stroke="#5a6fb8" stroke-width="0.500"/><ellipse cx="16.500" cy="15" rx="15" ry="7.500" transform="rotate(-27 16.500 15)" fill="rgba(120,150,230,0.450)" stroke="#3a5fd0" stroke-width="1.800"/></svg>
<svg class="b" style="left:969.4px;top:167px;" width="33" height="33" viewBox="0 0 33 33"><rect x="0" y="0" width="32.500" height="32.500" fill="#86acf2"/><path d="M19 0C19 6 15 9 11 12C5 16 4 24 9 28C15 32 25 30 26 23C27 17 25 14 27 9C28 5 29 2 29 0Z" fill="#5f8ce0"/><path d="M20.500 0C20.500 7 17 10 13.500 13C8.500 16.500 8.500 23 12.500 26C17.500 28.500 22.500 25.500 22.500 21C22.500 16 21.500 13 23.500 8C24.500 4 25.500 2 26 0Z" fill="#3f6fcc"/><circle cx="14.500" cy="20" r="5" fill="#1d4796"/><path d="M21.500 0L17.500 13 13 17 19.500 17 24.500 0Z" fill="#1d4796"/><path d="M0.500 0v32h32" stroke="#7a8aa8" stroke-width="1" fill="none"/></svg>
<svg class="b" style="left:1015.7px;top:167px;" width="33" height="33" viewBox="0 0 33 33"><path d="M1 0v31h31" stroke="#9a9a9a" stroke-width="1.6" fill="none"/><path d="M3.500 23.500l8-8.500 6 5.500L30.500 6" stroke="#1f3da0" stroke-width="2.800" fill="none"/></svg>
<svg class="b" style="left:1053.4px;top:167px;" width="33" height="33" viewBox="0 0 33 33"><path d="M1 0v31h31" stroke="#9a9a9a" stroke-width="1.6" fill="none"/><rect x="4" y="7" width="6" height="24" fill="#8fb0f0" stroke="#2f55b8" stroke-width="1.200"/><rect x="13" y="12" width="6" height="19" fill="#8fb0f0" stroke="#2f55b8" stroke-width="1.200"/><rect x="22" y="1" width="6" height="30" fill="#8fb0f0" stroke="#2f55b8" stroke-width="1.200"/></svg>
<svg class="b" style="left:1090.7px;top:167px;" width="33" height="33" viewBox="0 0 33 33"><path d="M1 31V2l6 5 3-2 5 6 6-6 4 1 5 8v17z" fill="#5f8ce0"/><path d="M1 31V19l5-2 4 3 4-4 4 5 4-2 4 3 4 1v8z" fill="#1f3f96"/><path d="M1 0v31h31" stroke="#9a9a9a" stroke-width="1.400" fill="none"/></svg>
<svg class="b" style="left:1128.2px;top:167px;" width="33" height="33" viewBox="0 0 33 33"><path d="M1 0v31h31" stroke="#9a9a9a" stroke-width="1.6" fill="none"/><g stroke="#2a4aa8" stroke-width="1.300" fill="#a8c0f4"><path d="M7.500 4v22M5 4h5M5 26h5" fill="none"/><rect x="5" y="9" width="5" height="11"/><path d="M16.500 1v29M14 1h5M14 30h5" fill="none"/><rect x="14" y="5" width="5" height="20"/><path d="M25.500 3v19M23 3h5M23 22h5" fill="none"/><rect x="23" y="7" width="5" height="10"/></g></svg>
<svg class="b" style="left:1165.6px;top:167px;" width="33" height="33" viewBox="0 0 33 33"><path d="M1 0v31h31" stroke="#9a9a9a" stroke-width="1.600" fill="none"/><g fill="#8fb0f0" stroke="#2f55b8" stroke-width="1.100"><rect x="2" y="3" width="11" height="4.600"/><rect x="2" y="8" width="17" height="4.600"/><rect x="2" y="13" width="25" height="4.600"/><rect x="2" y="18" width="15" height="4.600"/><rect x="2" y="23" width="10" height="4.600"/></g></svg>
<svg class="b" style="left:1212px;top:167px;" width="33" height="33" viewBox="0 0 33 33"><rect x="0" y="0" width="8" height="16" fill="#b4cdf8"/><rect x="0" y="16" width="8" height="16" fill="#3a70d8"/><rect x="8" y="0" width="8" height="16" fill="#3a70d8"/><rect x="8" y="16" width="8" height="16" fill="#8eb0f0"/><rect x="16" y="0" width="8" height="16" fill="#8eb0f0"/><rect x="16" y="16" width="8" height="16" fill="#2f62c8"/><rect x="24" y="0" width="8" height="16" fill="#5a8ae0"/><rect x="24" y="16" width="8" height="16" fill="#b4cdf8"/><rect x="0.500" y="0.500" width="31" height="31" fill="none" stroke="#8a8a8a"/></svg>
<svg class="b" style="left:1249.6px;top:167px;" width="33" height="33" viewBox="0 0 33 33"><circle cx="16" cy="16" r="16" fill="#3a78e0"/><path d="M16 16L6 4A16 16 0 0 1 31 10z" fill="#1f52c0"/><path d="M16 16L31 10A16 16 0 0 1 29 25z" fill="#5f98ea"/><path d="M16 16L29 25A16 16 0 0 1 20 31.500z" fill="#8ab4f4"/></svg>
<svg class="b" style="left:1288.4px;top:167px;" width="33" height="33" viewBox="0 0 33 33"><rect x="0" y="2" width="30" height="29" fill="#3a3a3a"/><rect x="1" y="3" width="15" height="12" fill="#8eb0f0"/><rect x="17" y="3" width="12" height="12" fill="#3a70d8"/><rect x="1" y="16" width="8" height="9" fill="#b4cdf8"/><rect x="1" y="26" width="8" height="4" fill="#2f55b8"/><rect x="10" y="16" width="10" height="14" fill="#6a9af0"/><rect x="21" y="16" width="8" height="14" fill="#a8c4f8"/></svg>
<svg class="b" style="left:1324.6px;top:167px;" width="33" height="33" viewBox="0 0 33 33"><rect x="0" y="1" width="9.500" height="17" fill="#2f62c8"/><rect x="0" y="18" width="9.500" height="13" fill="#a8c4f8"/><rect x="10.500" y="1" width="9.500" height="12" fill="#3a70d8"/><rect x="10.500" y="9" width="9.500" height="6" fill="#0f3a96"/><rect x="10.500" y="15" width="9.500" height="16" fill="#c4d8fa"/><rect x="21" y="1" width="9.500" height="20" fill="#3a70d8"/><rect x="21" y="14" width="9.500" height="7" fill="#0f3a96"/><rect x="21" y="21" width="9.500" height="10" fill="#a8c4f8"/></svg>
<svg class="b" style="left:1371px;top:167px;" width="33" height="33" viewBox="0 0 33 33"><path d="M1 0v31h31" stroke="#9a9a9a" stroke-width="1.600" fill="none"/><rect x="14" y="1" width="17" height="11" fill="#eaf1ff" stroke="#2f55b8" stroke-width="1.600"/><path d="M17 5h4M24 5h4M17 8h4M24 8h4" stroke="#2f55b8" stroke-width="1.200"/></svg>
<div class="b" style="left:1406px;top:165px;width:113px;height:37px;background:#e7e7e7;"></div>
<svg class="b" style="left:1408px;top:167px;" width="33" height="33" viewBox="0 0 33 33"><path d="M1 0v31h31" stroke="#c8c8c8" stroke-width="1.600" fill="none"/><text x="8" y="17" font-family="Liberation Serif,serif" font-style="italic" font-size="20" fill="#e3d7a8">f</text><text x="15" y="15" font-family="Liberation Serif,serif" font-size="13" fill="#e3d7a8">(•)</text><path d="M3 24c6-5 10 4 16 0s8 2 12 0" stroke="#c3cfe8" stroke-width="1.800" fill="none"/></svg>
<svg class="b" style="left:1446px;top:167px;" width="33" height="33" viewBox="0 0 33 33"><path d="M4 0h28v14l-6 4v8l-6 5H4l-2-8 2-6-3-6z" fill="#b7c3dc"/><path d="M14 0l4 8 8 4 6-4V0z" fill="#a9b8d6"/><path d="M1 0v31h31" stroke="#d0d0d0" stroke-width="1" fill="none"/></svg>
<svg class="b" style="left:1483.4px;top:167px;" width="33" height="33" viewBox="0 0 33 33"><path d="M1 0v31h31M16 0v31M31 0v31" stroke="#c6c6c6" stroke-width="1.600" fill="none"/><path d="M1 4l15 14 15-14M1 26l15-16 15 12M1 14l15 12 15-6" stroke="#c3cfe8" stroke-width="1.600" fill="none"/></svg>
<span class="t" style="left:1067.80px;top:214.42px;font-size:22.3px;line-height:22.3px;color:#000;letter-spacing:0.463px;font-weight:700;">Mean(height) &amp; weight vs. name</span>
<div class="b" style="left:889px;top:243px;width:673px;height:53px;background:#f8f8f8;border:1px solid #8f8f8f;box-sizing:border-box;"></div>
<span class="t" style="left:1189.95px;top:262.35px;font-size:17.9px;line-height:17.9px;color:#868686;letter-spacing:-0.186px;font-weight:700;">Group X</span>
<div class="b" style="left:1564px;top:243px;width:53px;height:53px;background:#f8f8f8;border:1px solid #8f8f8f;box-sizing:border-box;"></div>
<span class="t" style="left:1567.50px;top:262.35px;font-size:17.9px;line-height:17.9px;color:#868686;letter-spacing:0.143px;font-weight:700;">Wrap</span>
<div class="b" style="left:1681px;top:243px;width:122px;height:51px;background:#f8f8f8;border:1px solid #8f8f8f;box-sizing:border-box;"></div>
<span class="t" style="left:1708.35px;top:261.15px;font-size:17.9px;line-height:17.9px;color:#868686;letter-spacing:-0.055px;font-weight:700;">Overlay</span>
<div class="b" style="left:1681px;top:297px;width:122px;height:51px;background:#f8f8f8;border:1px solid #8f8f8f;box-sizing:border-box;"></div>
<span class="t" style="left:1718.75px;top:315.85px;font-size:17.9px;line-height:17.9px;color:#868686;letter-spacing:-0.447px;font-weight:700;">Color</span>
<div class="b" style="left:1681px;top:351px;width:122px;height:51px;background:#f8f8f8;border:1px solid #8f8f8f;box-sizing:border-box;"></div>
<span class="t" style="left:1724.70px;top:369.85px;font-size:17.9px;line-height:17.9px;color:#868686;letter-spacing:-0.805px;font-weight:700;">Size</span>
<div class="b" style="left:1681px;top:405px;width:122px;height:51px;background:#f8f8f8;border:1px solid #8f8f8f;box-sizing:border-box;"></div>
<span class="t" style="left:1708.35px;top:423.85px;font-size:17.9px;line-height:17.9px;color:#868686;letter-spacing:0.203px;font-weight:700;">Interval</span>
<div class="b" style="left:1626px;top:298px;width:52px;height:563px;background:#f8f8f8;border:1px solid #8f8f8f;box-sizing:border-box;"></div>
<div class="b" style="left:1641px;top:545px;width:20px;height:70px;"></div>
<span class="t" style="left:1649.7px;top:579.5px;font-size:17.9px;line-height:17.9px;color:#868686;font-weight:700;transform:translate(-50%,-50%) rotate(90deg);letter-spacing:-0.112px;">Group Y</span>
<div class="b" style="left:1626px;top:863px;width:52px;height:100px;background:#f8f8f8;border:1px solid #8f8f8f;box-sizing:border-box;"></div>
<span class="t" style="left:1633.95px;top:906.85px;font-size:17.9px;line-height:17.9px;color:#868686;letter-spacing:-0.822px;font-weight:700;">Freq</span>
<div class="b" style="left:1681px;top:863px;width:122px;height:100px;background:#f8f8f8;border:1px solid #8f8f8f;box-sizing:border-box;"></div>
<span class="t" style="left:1720.90px;top:906.85px;font-size:17.9px;line-height:17.9px;color:#868686;letter-spacing:-0.646px;font-weight:700;">Page</span>
<div class="b" style="left:818px;top:863px;width:69px;height:100px;background:#f8f8f8;border:1px solid #8f8f8f;box-sizing:border-box;"></div>
<span class="t" style="left:833.80px;top:892.65px;font-size:17.9px;line-height:17.9px;color:#868686;letter-spacing:0.400px;font-weight:700;">Map</span>
<span class="t" style="left:826.90px;top:917.65px;font-size:17.9px;line-height:17.9px;color:#868686;letter-spacing:-0.704px;font-weight:700;">Shape</span>
<svg class="b" style="left:800px;top:220px;font-family:'Liberation Sans',sans-serif;" width="1120" height="790" viewBox="0 0 1120 790" fill="#111"><rect x="88.5" y="78" width="675.0" height="564.3" fill="#fff" stroke="#8c8c8c" stroke-width="1"/>
<path d="M81 631.25H88.5M81 522.40H88.5M81 413.55H88.5M81 304.70H88.5M81 195.85H88.5M81 87.00H88.5M763.5 603.10H771M763.5 478.65H771M763.5 354.20H771M763.5 229.75H771M763.5 105.30H771M763.5 540.88H767.5M763.5 416.42H767.5M763.5 291.98H767.5M763.5 167.53H767.5" stroke="#8c8c8c" stroke-width="1" fill="none"/>
<text x="76.0" y="637.5" text-anchor="end" font-size="17.3" textLength="18.6" lengthAdjust="spacingAndGlyphs">50</text>
<text x="76.0" y="528.7" text-anchor="end" font-size="17.3" textLength="18.6" lengthAdjust="spacingAndGlyphs">75</text>
<text x="76.0" y="419.8" text-anchor="end" font-size="17.3" textLength="27.3" lengthAdjust="spacingAndGlyphs">100</text>
<text x="76.0" y="311.0" text-anchor="end" font-size="17.3" textLength="27.3" lengthAdjust="spacingAndGlyphs">125</text>
<text x="76.0" y="202.1" text-anchor="end" font-size="17.3" textLength="27.3" lengthAdjust="spacingAndGlyphs">150</text>
<text x="76.0" y="93.3" text-anchor="end" font-size="17.3" textLength="27.3" lengthAdjust="spacingAndGlyphs">175</text>
<text x="773.7" y="610.1" font-size="17.3" textLength="18.8" lengthAdjust="spacingAndGlyphs">50</text>
<text x="773.7" y="485.6" font-size="17.3" textLength="18.8" lengthAdjust="spacingAndGlyphs">55</text>
<text x="773.7" y="361.2" font-size="17.3" textLength="18.8" lengthAdjust="spacingAndGlyphs">60</text>
<text x="773.7" y="236.8" font-size="17.3" textLength="18.8" lengthAdjust="spacingAndGlyphs">65</text>
<text x="773.7" y="112.3" font-size="17.3" textLength="18.8" lengthAdjust="spacingAndGlyphs">70</text>
<polyline points="97.15,254.64 114.46,334.01 131.90,249.94 148.95,358.90 166.38,279.53 183.69,254.64 201.00,204.86 218.31,204.86 235.67,383.79 252.83,150.38 270.23,304.42 287.54,279.53 304.85,229.75 322.15,204.86 339.46,329.31 356.92,483.35 373.92,125.49 390.87,284.20 408.69,229.75 426.00,329.31 443.91,383.75 460.62,155.08 478.38,100.62 495.23,229.75 512.54,254.64 529.82,558.02 547.15,304.42 564.46,329.31 581.77,354.20 599.08,304.42 616.38,225.05 633.69,304.42 651.00,408.68 668.31,304.42 685.71,150.38 702.92,379.09 720.36,458.46 737.54,354.20 754.85,229.75" fill="none" stroke="#3e5ba2" stroke-width="2.5" stroke-linejoin="miter" stroke-miterlimit="4"/>
<circle cx="97.15" cy="417.90" r="4.6" fill="none" stroke="#000" stroke-width="1.7"/>
<circle cx="114.46" cy="383.07" r="4.6" fill="none" stroke="#000" stroke-width="1.7"/>
<circle cx="131.77" cy="361.30" r="4.6" fill="none" stroke="#000" stroke-width="1.7"/>
<circle cx="149.08" cy="361.30" r="4.6" fill="none" stroke="#000" stroke-width="1.7"/>
<circle cx="166.38" cy="483.21" r="4.6" fill="none" stroke="#000" stroke-width="1.7"/>
<circle cx="183.69" cy="417.90" r="4.6" fill="none" stroke="#000" stroke-width="1.7"/>
<circle cx="201.00" cy="391.78" r="4.6" fill="none" stroke="#000" stroke-width="1.7"/>
<circle cx="218.31" cy="387.43" r="4.6" fill="none" stroke="#000" stroke-width="1.7"/>
<circle cx="235.62" cy="504.98" r="4.6" fill="none" stroke="#000" stroke-width="1.7"/>
<circle cx="252.92" cy="361.30" r="4.6" fill="none" stroke="#000" stroke-width="1.7"/>
<circle cx="270.23" cy="452.74" r="4.6" fill="none" stroke="#000" stroke-width="1.7"/>
<circle cx="287.54" cy="444.03" r="4.6" fill="none" stroke="#000" stroke-width="1.7"/>
<circle cx="304.85" cy="330.82" r="4.6" fill="none" stroke="#000" stroke-width="1.7"/>
<circle cx="322.15" cy="217.62" r="4.6" fill="none" stroke="#000" stroke-width="1.7"/>
<circle cx="339.46" cy="291.64" r="4.6" fill="none" stroke="#000" stroke-width="1.7"/>
<circle cx="356.77" cy="526.75" r="4.6" fill="none" stroke="#000" stroke-width="1.7"/>
<circle cx="374.08" cy="356.95" r="4.6" fill="none" stroke="#000" stroke-width="1.7"/>
<circle cx="391.38" cy="391.78" r="4.6" fill="none" stroke="#000" stroke-width="1.7"/>
<circle cx="408.69" cy="422.26" r="4.6" fill="none" stroke="#000" stroke-width="1.7"/>
<circle cx="426.00" cy="496.28" r="4.6" fill="none" stroke="#000" stroke-width="1.7"/>
<circle cx="443.31" cy="435.32" r="4.6" fill="none" stroke="#000" stroke-width="1.7"/>
<circle cx="460.62" cy="265.51" r="4.6" fill="none" stroke="#000" stroke-width="1.7"/>
<circle cx="477.92" cy="100.06" r="4.6" fill="none" stroke="#000" stroke-width="1.7"/>
<circle cx="495.23" cy="230.68" r="4.6" fill="none" stroke="#000" stroke-width="1.7"/>
<circle cx="512.54" cy="448.38" r="4.6" fill="none" stroke="#000" stroke-width="1.7"/>
<circle cx="529.85" cy="570.29" r="4.6" fill="none" stroke="#000" stroke-width="1.7"/>
<circle cx="547.15" cy="343.89" r="4.6" fill="none" stroke="#000" stroke-width="1.7"/>
<circle cx="564.46" cy="313.41" r="4.6" fill="none" stroke="#000" stroke-width="1.7"/>
<circle cx="581.77" cy="348.24" r="4.6" fill="none" stroke="#000" stroke-width="1.7"/>
<circle cx="599.08" cy="396.13" r="4.6" fill="none" stroke="#000" stroke-width="1.7"/>
<circle cx="616.38" cy="361.30" r="4.6" fill="none" stroke="#000" stroke-width="1.7"/>
<circle cx="633.69" cy="448.38" r="4.6" fill="none" stroke="#000" stroke-width="1.7"/>
<circle cx="651.00" cy="435.32" r="4.6" fill="none" stroke="#000" stroke-width="1.7"/>
<circle cx="668.31" cy="478.86" r="4.6" fill="none" stroke="#000" stroke-width="1.7"/>
<circle cx="685.62" cy="291.64" r="4.6" fill="none" stroke="#000" stroke-width="1.7"/>
<circle cx="702.92" cy="504.98" r="4.6" fill="none" stroke="#000" stroke-width="1.7"/>
<circle cx="702.92" cy="291.64" r="4.6" fill="none" stroke="#000" stroke-width="1.7"/>
<circle cx="720.23" cy="557.23" r="4.6" fill="none" stroke="#000" stroke-width="1.7"/>
<circle cx="737.54" cy="483.21" r="4.6" fill="none" stroke="#000" stroke-width="1.7"/>
<circle cx="754.85" cy="365.66" r="4.6" fill="none" stroke="#000" stroke-width="1.7"/>
<text transform="translate(102.75,645.3) rotate(-90)" text-anchor="end" font-size="14.3" fill="#262626" textLength="45.4" lengthAdjust="spacingAndGlyphs">ALFRED</text>
<text transform="translate(120.06,645.3) rotate(-90)" text-anchor="end" font-size="14.3" fill="#262626" textLength="33.3" lengthAdjust="spacingAndGlyphs">ALICE</text>
<text transform="translate(137.37,645.3) rotate(-90)" text-anchor="end" font-size="14.3" fill="#262626" textLength="24.9" lengthAdjust="spacingAndGlyphs">AMY</text>
<text transform="translate(154.68,645.3) rotate(-90)" text-anchor="end" font-size="14.3" fill="#262626" textLength="55.0" lengthAdjust="spacingAndGlyphs">BARBARA</text>
<text transform="translate(171.98,645.3) rotate(-90)" text-anchor="end" font-size="14.3" fill="#262626" textLength="39.7" lengthAdjust="spacingAndGlyphs">CAROL</text>
<text transform="translate(189.29,645.3) rotate(-90)" text-anchor="end" font-size="14.3" fill="#262626" textLength="35.8" lengthAdjust="spacingAndGlyphs">CHRIS</text>
<text transform="translate(206.60,645.3) rotate(-90)" text-anchor="end" font-size="14.3" fill="#262626" textLength="29.2" lengthAdjust="spacingAndGlyphs">CLAY</text>
<text transform="translate(223.91,645.3) rotate(-90)" text-anchor="end" font-size="14.3" fill="#262626" textLength="40.3" lengthAdjust="spacingAndGlyphs">DANNY</text>
<text transform="translate(241.22,645.3) rotate(-90)" text-anchor="end" font-size="14.3" fill="#262626" textLength="34.3" lengthAdjust="spacingAndGlyphs">DAVID</text>
<text transform="translate(258.52,645.3) rotate(-90)" text-anchor="end" font-size="14.3" fill="#262626" textLength="50.7" lengthAdjust="spacingAndGlyphs">EDWARD</text>
<text transform="translate(275.83,645.3) rotate(-90)" text-anchor="end" font-size="14.3" fill="#262626" textLength="62.7" lengthAdjust="spacingAndGlyphs">ELIZABETH</text>
<text transform="translate(293.14,645.3) rotate(-90)" text-anchor="end" font-size="14.3" fill="#262626" textLength="66.5" lengthAdjust="spacingAndGlyphs">FREDERICK</text>
<text transform="translate(310.45,645.3) rotate(-90)" text-anchor="end" font-size="14.3" fill="#262626" textLength="40.1" lengthAdjust="spacingAndGlyphs">HENRY</text>
<text transform="translate(327.75,645.3) rotate(-90)" text-anchor="end" font-size="14.3" fill="#262626" textLength="43.3" lengthAdjust="spacingAndGlyphs">JACLYN</text>
<text transform="translate(345.06,645.3) rotate(-90)" text-anchor="end" font-size="14.3" fill="#262626" textLength="38.4" lengthAdjust="spacingAndGlyphs">JAMES</text>
<text transform="translate(362.37,645.3) rotate(-90)" text-anchor="end" font-size="14.3" fill="#262626" textLength="29.4" lengthAdjust="spacingAndGlyphs">JANE</text>
<text transform="translate(379.68,645.3) rotate(-90)" text-anchor="end" font-size="14.3" fill="#262626" textLength="51.2" lengthAdjust="spacingAndGlyphs">JEFFREY</text>
<text transform="translate(396.98,645.3) rotate(-90)" text-anchor="end" font-size="14.3" fill="#262626" textLength="22.4" lengthAdjust="spacingAndGlyphs">JOE</text>
<text transform="translate(414.29,645.3) rotate(-90)" text-anchor="end" font-size="14.3" fill="#262626" textLength="31.3" lengthAdjust="spacingAndGlyphs">JOHN</text>
<text transform="translate(431.60,645.3) rotate(-90)" text-anchor="end" font-size="14.3" fill="#262626" textLength="30.1" lengthAdjust="spacingAndGlyphs">JUDY</text>
<text transform="translate(448.91,645.3) rotate(-90)" text-anchor="end" font-size="14.3" fill="#262626" textLength="32.4" lengthAdjust="spacingAndGlyphs">KATIE</text>
<text transform="translate(466.22,645.3) rotate(-90)" text-anchor="end" font-size="14.3" fill="#262626" textLength="26.9" lengthAdjust="spacingAndGlyphs">KIRK</text>
<text transform="translate(483.52,645.3) rotate(-90)" text-anchor="end" font-size="14.3" fill="#262626" textLength="64.8" lengthAdjust="spacingAndGlyphs">LAWRENCE</text>
<text transform="translate(500.83,645.3) rotate(-90)" text-anchor="end" font-size="14.3" fill="#262626" textLength="39.0" lengthAdjust="spacingAndGlyphs">LESLIE</text>
<text transform="translate(518.14,645.3) rotate(-90)" text-anchor="end" font-size="14.3" fill="#262626" textLength="35.8" lengthAdjust="spacingAndGlyphs">LEWIS</text>
<text transform="translate(535.45,645.3) rotate(-90)" text-anchor="end" font-size="14.3" fill="#262626" textLength="33.3" lengthAdjust="spacingAndGlyphs">LILLIE</text>
<text transform="translate(552.75,645.3) rotate(-90)" text-anchor="end" font-size="14.3" fill="#262626" textLength="33.9" lengthAdjust="spacingAndGlyphs">LINDA</text>
<text transform="translate(570.06,645.3) rotate(-90)" text-anchor="end" font-size="14.3" fill="#262626" textLength="42.2" lengthAdjust="spacingAndGlyphs">LOUISE</text>
<text transform="translate(587.37,645.3) rotate(-90)" text-anchor="end" font-size="14.3" fill="#262626" textLength="46.0" lengthAdjust="spacingAndGlyphs">MARION</text>
<text transform="translate(604.68,645.3) rotate(-90)" text-anchor="end" font-size="14.3" fill="#262626" textLength="33.3" lengthAdjust="spacingAndGlyphs">MARK</text>
<text transform="translate(621.98,645.3) rotate(-90)" text-anchor="end" font-size="14.3" fill="#262626" textLength="48.4" lengthAdjust="spacingAndGlyphs">MARTHA</text>
<text transform="translate(639.29,645.3) rotate(-90)" text-anchor="end" font-size="14.3" fill="#262626" textLength="33.1" lengthAdjust="spacingAndGlyphs">MARY</text>
<text transform="translate(656.60,645.3) rotate(-90)" text-anchor="end" font-size="14.3" fill="#262626" textLength="51.2" lengthAdjust="spacingAndGlyphs">MICHAEL</text>
<text transform="translate(673.91,645.3) rotate(-90)" text-anchor="end" font-size="14.3" fill="#262626" textLength="35.4" lengthAdjust="spacingAndGlyphs">PATTY</text>
<text transform="translate(691.22,645.3) rotate(-90)" text-anchor="end" font-size="14.3" fill="#262626" textLength="42.9" lengthAdjust="spacingAndGlyphs">PHILLIP</text>
<text transform="translate(708.52,645.3) rotate(-90)" text-anchor="end" font-size="14.3" fill="#262626" textLength="47.8" lengthAdjust="spacingAndGlyphs">ROBERT</text>
<text transform="translate(725.83,645.3) rotate(-90)" text-anchor="end" font-size="14.3" fill="#262626" textLength="39.7" lengthAdjust="spacingAndGlyphs">SUSAN</text>
<text transform="translate(743.14,645.3) rotate(-90)" text-anchor="end" font-size="14.3" fill="#262626" textLength="19.8" lengthAdjust="spacingAndGlyphs">TIM</text>
<text transform="translate(760.45,645.3) rotate(-90)" text-anchor="end" font-size="14.3" fill="#262626" textLength="47.3" lengthAdjust="spacingAndGlyphs">WILLIAM</text>
<text transform="translate(35.200000000000045,359) rotate(-90)" text-anchor="middle" font-size="17.3" textLength="53" lengthAdjust="spacingAndGlyphs">weight</text>
<text transform="translate(805.5,358.5) rotate(90)" text-anchor="middle" font-size="17.3" textLength="51" lengthAdjust="spacingAndGlyphs">height</text>
<text x="424.5" y="740" text-anchor="middle" font-size="17.3" textLength="43" lengthAdjust="spacingAndGlyphs">name</text>
<circle cx="328" cy="764" r="4.6" fill="none" stroke="#000" stroke-width="1.7"/>
<text x="344.5" y="770.8" font-size="17.3" textLength="52.5" lengthAdjust="spacingAndGlyphs">weight</text>
<path d="M421 764.6H444.5" stroke="#3e5ba2" stroke-width="2.5"/>
<text x="448.5" y="770.8" font-size="17.3" textLength="104" lengthAdjust="spacingAndGlyphs">Mean(height)</text></svg>
<div class="b" style="left:0px;top:1003px;width:1920px;height:1.5px;background:#a9b1c9;"></div>
<div class="b" style="left:0px;top:1004.5px;width:1920px;height:25.5px;background:linear-gradient(#eaeef8,#e2e7f3);"></div>
<div class="b" style="left:1819px;top:1005px;width:1px;height:25px;background:#c8cede;"></div>
<svg class="b" style="left:1826px;top:1008px;" width="16" height="16" viewBox="0 0 16 16"><path d="M1 8L8 1.500 15 8" stroke="#2f7ad8" stroke-width="2" fill="none"/><path d="M3 8v7h10V8L8 3.500z" fill="#fff6d8" stroke="#8a9ac0" stroke-width="0.800"/><rect x="6.500" y="10" width="3" height="5" fill="#e8a02a"/></svg>
<div class="b" style="left:1856.5px;top:1009.5px;width:15px;height:14px;background:#fff;border:1px solid #b8b8b8;box-sizing:border-box;"></div>
<svg class="b" style="left:1879px;top:1012px;" width="11" height="8" viewBox="0 0 11 8"><path d="M0 0.500h10.500L5.200 7.500z" fill="#111"/></svg>
<svg class="b" style="left:1902px;top:985px;" width="12" height="12" viewBox="0 0 12 12"><g fill="#9a9a9a"><rect x="9" y="0" width="2" height="2"/><rect x="6" y="3" width="2" height="2"/><rect x="9" y="3" width="2" height="2"/><rect x="3" y="6" width="2" height="2"/><rect x="6" y="6" width="2" height="2"/><rect x="9" y="6" width="2" height="2"/><rect x="0" y="9" width="2" height="2"/><rect x="3" y="9" width="2" height="2"/><rect x="6" y="9" width="2" height="2"/><rect x="9" y="9" width="2" height="2"/></g></svg>
<div class="b" style="left:0px;top:1030px;width:1920px;height:50px;background:#000;"></div>
<svg class="b" style="left:20px;top:1045px;" width="20" height="20" viewBox="0 0 20 20"><path d="M0 3l8.500-1.200V9.500H0zM9.500 1.600L20 0v9.500H9.500zM0 10.500h8.500v7.700L0 17zM9.500 10.500H20V20l-10.500-1.500z" fill="#fff"/></svg>
<div class="b" style="left:60px;top:1030px;width:430px;height:50px;background:#f2f2f2;border-top:1px solid #cfcfcf;box-sizing:border-box;"></div>
<svg class="b" style="left:70px;top:1040px;" width="30" height="30" viewBox="0 0 30 30"><circle cx="15" cy="15" r="12.500" fill="none" stroke="#9a9a9a" stroke-width="3.500" opacity="0.500"/><circle cx="15" cy="15" r="12" fill="none" stroke="#1c1c1c" stroke-width="2.800"/></svg>
<span class="t" style="left:110.50px;top:1046.79px;font-size:18.2px;line-height:18.2px;color:#3f3f3f;letter-spacing:-0.466px;">Type here to search</span>
<svg class="b" style="left:457px;top:1045px;" width="16" height="21" viewBox="0 0 16 21"><rect x="4.500" y="1" width="7" height="12" rx="3.500" fill="none" stroke="#333" stroke-width="1.400"/><path d="M1.500 9.500c0 8 13 8 13 0M8 15.500v3.500M4.500 19.500h7" stroke="#333" stroke-width="1.400" fill="none"/></svg>
<svg class="b" style="left:508px;top:1046px;" width="25" height="18" viewBox="0 0 25 18"><rect x="5" y="1" width="15" height="16" fill="none" stroke="#fff" stroke-width="1.400"/><path d="M3 3.500H1v11h2M22 3.500h2v11h-2" stroke="#fff" stroke-width="1.400" fill="none"/></svg>
<svg class="b" style="left:565px;top:1040px;" width="28" height="28" viewBox="0 0 28 28"><circle cx="14" cy="14" r="13.500" fill="#de4a3c"/><path d="M14 14L2.300 7.200A13.500 13.500 0 0 0 12 27.400z" fill="#2da44e"/><path d="M14 14L12 27.400A13.500 13.500 0 0 0 26.500 9z" fill="#f6c42c"/><path d="M14 14L26.500 9A13.500 13.500 0 0 0 2.300 7.200z" fill="#de4a3c"/><circle cx="14" cy="14" r="6.300" fill="#f2f2f2"/><circle cx="14" cy="14" r="5" fill="#4a8af0"/></svg>
<div class="b" style="left:559.5px;top:1077.3px;width:40.0px;height:2.7px;background:#8fb8e0;"></div>
<svg class="b" style="left:618px;top:1041px;" width="26" height="27" viewBox="0 0 26 27"><path d="M1 13C2 5 8 0 14 0c8 0 12 6 12 13v3H9c0 5 5 8 15 5v5c-10 3-20 0-20-10 0-4 2-7 5-9-4 1-6 3-8 6z" fill="#1f7ad8"/><path d="M9 11h9c0-3-2-5-4.500-5S9 8 9 11z" fill="#000"/></svg>
<div class="b" style="left:611px;top:1077.3px;width:41px;height:2.7px;background:#8fb8e0;"></div>
<svg class="b" style="left:667px;top:1040px;" width="32" height="30" viewBox="0 0 32 30"><circle cx="15" cy="6" r="5" fill="#6a6fd0"/><circle cx="24.500" cy="7.500" r="3.500" fill="#5a5fc0"/><path d="M8 11h15v11c0 5-15 5-15 0z" fill="#6a6fd0"/><path d="M22 12h8v8c0 4-8 4-8 0z" fill="#5055b8"/><rect x="1" y="7" width="13" height="13" rx="1.500" fill="#4a50b0"/><path d="M4 10.500h7M7.500 10.500v7" stroke="#fff" stroke-width="1.800"/><circle cx="24" cy="24" r="5.500" fill="#8ac83a" stroke="#fff" stroke-width="1"/><path d="M21.500 24l2 2 3.500-4" stroke="#fff" stroke-width="1.500" fill="none"/></svg>
<div class="b" style="left:663px;top:1077.3px;width:40.700000000000045px;height:2.7px;background:#8fb8e0;"></div>
<svg class="b" style="left:721px;top:1043px;" width="28" height="24" viewBox="0 0 28 24"><rect x="10" y="2" width="17" height="20" fill="#f4f0f6" stroke="#7a3a8a" stroke-width="1.200"/><path d="M18 6h6M18 10h6M18 14h6M18 18h6" stroke="#7a3a8a" stroke-width="2"/><path d="M0 2.500L15 0v24L0 21.500z" fill="#82388f"/><path d="M4 17V7l7 10V7" stroke="#fff" stroke-width="2" fill="none"/></svg>
<svg class="b" style="left:771px;top:1041px;" width="30" height="27" viewBox="0 0 30 27"><rect x="9" y="1" width="20" height="18" fill="#2a8ae0"/><rect x="19" y="1" width="10" height="9" fill="#4ab0f4"/><rect x="9" y="10" width="10" height="9" fill="#1868c0"/><path d="M9 14l10 6 10-6v12H9z" fill="#1a9ae8"/><rect x="0" y="6" width="15" height="15" rx="1.500" fill="#0f64c0"/><circle cx="7.500" cy="13.500" r="3.600" fill="none" stroke="#fff" stroke-width="1.900"/></svg>
<div class="b" style="left:767px;top:1077.3px;width:30px;height:2.7px;background:#8fb8e0;"></div>
<div class="b" style="left:798px;top:1077.3px;width:9.5px;height:2.7px;background:#6f98c0;"></div>
<svg class="b" style="left:823px;top:1041px;" width="31" height="27" viewBox="0 0 31 27"><rect x="8" y="0" width="22" height="26" rx="1.500" fill="#1f9a58"/><rect x="19" y="0" width="11" height="8.700" fill="#33c480"/><rect x="8" y="0" width="11" height="8.700" fill="#21a366"/><rect x="8" y="8.700" width="11" height="8.700" fill="#107c41"/><rect x="19" y="8.700" width="11" height="8.700" fill="#21a366"/><rect x="8" y="17.400" width="22" height="8.600" fill="#185c37"/><rect x="0" y="6" width="15" height="15" rx="1.500" fill="#107c41"/><path d="M4 9.500l7 8M11 9.500l-7 8" stroke="#fff" stroke-width="1.900"/></svg>
<div class="b" style="left:818.7px;top:1077.3px;width:40.799999999999955px;height:2.7px;background:#8fb8e0;"></div>
<svg class="b" style="left:876px;top:1041px;" width="30" height="27" viewBox="0 0 30 27"><rect x="8" y="0" width="21" height="26" rx="1.500" fill="#2b7cd3"/><rect x="8" y="0" width="21" height="6.500" fill="#41a5ee"/><rect x="8" y="6.500" width="21" height="6.500" fill="#2b7cd3"/><rect x="8" y="13" width="21" height="6.500" fill="#185abd"/><rect x="8" y="19.500" width="21" height="6.500" fill="#103f91"/><rect x="0" y="6" width="15" height="15" rx="1.500" fill="#185abd"/><path d="M3 9.500l2 8 2.500-8 2.500 8 2-8" stroke="#fff" stroke-width="1.600" fill="none"/></svg>
<svg class="b" style="left:927px;top:1040px;" width="30" height="29" viewBox="0 0 30 29"><circle cx="17" cy="14" r="13" fill="#ed6c47"/><path d="M17 1a13 13 0 0 1 13 13H17z" fill="#ff8f6b"/><path d="M4 14h26a13 13 0 0 1-26 0z" fill="#d35230"/><rect x="0" y="7" width="15" height="15" rx="1.500" fill="#c43e1c"/><path d="M5.500 18.500v-8h3a2.500 2.500 0 0 1 0 5h-3" stroke="#fff" stroke-width="1.800" fill="none"/></svg>
<svg class="b" style="left:979px;top:1039px;" width="33" height="33" viewBox="0 0 33 33"><circle cx="10" cy="10" r="8" fill="#19aee8"/><circle cx="20" cy="20" r="8" fill="#19aee8"/><circle cx="15" cy="15" r="11.500" fill="#fff" stroke="#19aee8" stroke-width="2.500"/><path d="M19 11c-1-2-7-2.500-7 0.500s7 2 7 5.500-7 3-8 0.500" stroke="#19aee8" stroke-width="2.600" fill="none"/><circle cx="24.500" cy="25" r="6.500" fill="#6cb33e" stroke="#fff" stroke-width="1.200"/><path d="M21.500 25l2.300 2.300 4-4.500" stroke="#fff" stroke-width="1.600" fill="none"/></svg>
<div class="b" style="left:973.7px;top:1077.3px;width:40.0px;height:2.7px;background:#8fb8e0;"></div>
<svg class="b" style="left:1031px;top:1042px;" width="28" height="24" viewBox="0 0 28 24"><path d="M0 1h10l2 3h16v19H0z" fill="#f5c84a"/><rect x="0" y="5" width="28" height="13" fill="#ffe08a"/><path d="M5 23V13h18v10h-5v-5h-8v5z" fill="#3a9ae0"/><rect x="3" y="2" width="5" height="1.500" fill="#e06a3a"/></svg>
<svg class="b" style="left:1081px;top:1040px;" width="31" height="30" viewBox="0 0 31 30"><ellipse cx="14" cy="17" rx="13.500" ry="11" fill="#dfe4ec" stroke="#8a96a8"/><circle cx="7" cy="14" r="2.300" fill="#d83a3a"/><circle cx="12" cy="9.500" r="2.300" fill="#3a8ad8"/><circle cx="19" cy="10" r="2.300" fill="#3ab04a"/><circle cx="8" cy="21" r="2.300" fill="#e8c02a"/><ellipse cx="16" cy="19" rx="3" ry="2.500" fill="#222"/><path d="M28 1L17 27" stroke="#d8903a" stroke-width="2.600"/><path d="M29 0l-2.500 7-2.500-1z" fill="#e8d0a0"/></svg>
<svg class="b" style="left:1133px;top:1041px;" width="29" height="30" viewBox="0 0 29 30"><ellipse cx="14" cy="10" rx="13" ry="9" fill="#f4f4f4" stroke="#d83a3a" stroke-width="2.200"/><ellipse cx="7" cy="17" rx="6" ry="3.500" fill="#a86a6a"/><path d="M9 4l10 17M20 4L11 20" stroke="#9aa4b0" stroke-width="1.800"/><circle cx="20" cy="24" r="3.300" fill="none" stroke="#2a7ad0" stroke-width="2"/><circle cx="11" cy="24.500" r="3.300" fill="none" stroke="#2a7ad0" stroke-width="2"/></svg>
<svg class="b" style="left:1184px;top:1041px;" width="28" height="28" viewBox="0 0 28 28"><path d="M0 0h25l3 3v25H0z" fill="#2a3ad8"/><rect x="7" y="0" width="13" height="9" fill="#c8ccd8"/><rect x="14" y="1" width="4" height="7" fill="#5a4ab0"/><rect x="3" y="13" width="22" height="15" fill="#fbd0d8"/><path d="M3 16h22M3 19.500h22M3 23h22" stroke="#c02a4a" stroke-width="1.200"/></svg>
<svg class="b" style="left:1234px;top:1041px;" width="29" height="28" viewBox="0 0 29 28"><path d="M8 2h19l-3 21H0z" fill="#b8d4e8"/><path d="M9 4h17l-2.500 17H2z" fill="#d8ecf8"/><path d="M24 23l3-21 1.500 1-2.500 22-24 0-2-2z" fill="#8a96a0"/><path d="M9 1v3M12 1v3M15 1v3M18 1v3M21 1v3M24 1v3" stroke="#5a6a7a" stroke-width="1"/></svg>
<svg class="b" style="left:1288.5px;top:1040px;" width="23" height="30" viewBox="0 0 23 30"><rect x="0" y="0" width="23" height="30" rx="1" fill="#fff"/><rect x="3" y="3" width="17" height="5" fill="#000"/><g fill="#000"><path d="M3 11.500h4.500l-1 3.500H3zM9 11.500h4.500l-1 3.500H9zM15 11.500h5v3.500h-4.500zM3 17h4.500l-1 3.500H3zM9 17h4.500l-1 3.500H9zM15 17h5v3.500h-4.500zM3 22.500h4.500l-1 3.500H3zM9 22.500h4.500l-1 3.500H9zM15 22.500h5v3.500h-4.500z"/></g></svg>
<svg class="b" style="left:1336px;top:1040px;" width="32" height="30" viewBox="0 0 32 30"><rect x="1" y="1" width="15" height="5.200" fill="#4be34a"/><rect x="1" y="6.800" width="15" height="5.200" fill="#3fd640"/><rect x="1" y="12.600" width="15" height="5.200" fill="#35c838"/><rect x="1" y="18.400" width="15" height="5.200" fill="#2ab02e"/><rect x="16" y="5" width="6" height="8" fill="#6fe070"/><circle cx="13" cy="7.500" r="3.300" fill="#000"/><path d="M8.500 15.500c5-1.500 13-2 22.500-2.500-6 1.500-10 3-13.500 4.500-1 3-2 6-2.500 10-1.500-3-1.200-6-0.200-9-2.500-0.500-4.500-1.500-6.300-3z" fill="#1d6fd6"/><path d="M15 9.500l4 5-3 0.500z" fill="#2a8ae0"/></svg>
<div class="b" style="left:1377px;top:1030px;width:49.5px;height:50px;background:#3c3c3c;"></div>
<div class="b" style="left:1422px;top:1030px;width:4.5px;height:50px;background:#484848;"></div>
<svg class="b" style="left:1385.5px;top:1040px;" width="32" height="30" viewBox="0 0 32 30"><rect x="1" y="1" width="15" height="5.200" fill="#4be34a"/><rect x="1" y="6.800" width="15" height="5.200" fill="#3fd640"/><rect x="1" y="12.600" width="15" height="5.200" fill="#35c838"/><rect x="1" y="18.400" width="15" height="5.200" fill="#2ab02e"/><rect x="16" y="5" width="6" height="8" fill="#6fe070"/><circle cx="13" cy="7.500" r="3.300" fill="#000"/><path d="M8.500 15.500c5-1.500 13-2 22.500-2.500-6 1.500-10 3-13.500 4.500-1 3-2 6-2.500 10-1.500-3-1.200-6-0.200-9-2.500-0.500-4.500-1.500-6.300-3z" fill="#1d6fd6"/><path d="M15 9.500l4 5-3 0.500z" fill="#2a8ae0"/></svg>
<div class="b" style="left:1377px;top:1077.3px;width:49px;height:2.7px;background:#8fb8e0;"></div>
<svg class="b" style="left:1437px;top:1040px;" width="32" height="30" viewBox="0 0 32 30"><rect x="1" y="1" width="15" height="5.200" fill="#4be34a"/><rect x="1" y="6.800" width="15" height="5.200" fill="#3fd640"/><rect x="1" y="12.600" width="15" height="5.200" fill="#35c838"/><rect x="1" y="18.400" width="15" height="5.200" fill="#2ab02e"/><rect x="16" y="5" width="6" height="8" fill="#6fe070"/><circle cx="13" cy="7.500" r="3.300" fill="#000"/><path d="M8.500 15.500c5-1.500 13-2 22.500-2.500-6 1.500-10 3-13.500 4.500-1 3-2 6-2.500 10-1.500-3-1.200-6-0.200-9-2.500-0.500-4.500-1.500-6.300-3z" fill="#1d6fd6"/><path d="M15 9.500l4 5-3 0.500z" fill="#2a8ae0"/></svg>
<svg class="b" style="left:1490px;top:1040px;" width="28" height="28" viewBox="0 0 28 28"><circle cx="14" cy="14" r="13.500" fill="#d9dcdf"/><path d="M2 9c3-6 11-9 17-6-5 1-9 4-12 9-2 0-4-1-5-3z" fill="#6ab04a"/><path d="M4 23c3-3 7-4 11-3 2 2 5 3 8 2-4 6-14 7-19 1z" fill="#f2f2f2"/><path d="M11 7c7-1 12 4 13 11M21 10c-6 0-9 4-7 10" stroke="#2a6ab0" stroke-width="2.600" fill="none"/><path d="M5 5c5-3 12-3 17 1" stroke="#fff" stroke-width="1.500" fill="none" opacity="0.600"/></svg>
<svg class="b" style="left:1541px;top:1040px;" width="28" height="28" viewBox="0 0 28 28"><circle cx="14" cy="14" r="12.800" fill="#0e5a78" stroke="#2aa8e0" stroke-width="1.600"/><circle cx="13" cy="13" r="7.500" fill="#fff"/><path d="M8 20.500a8.500 8.500 0 0 0 14.500-4.500a9 9 0 0 1-14.500 4.500z" fill="#8cc84a"/><path d="M7 19a9.500 9.500 0 0 0 15.500-3" stroke="#6ab83a" stroke-width="2.500" fill="none"/></svg>
<div class="b" style="left:1535px;top:1077.3px;width:40px;height:2.7px;background:#8fb8e0;"></div>
<svg class="b" style="left:1610px;top:1044px;" width="20" height="20" viewBox="0 0 20 20"><circle cx="13" cy="5.500" r="3.300" fill="none" stroke="#fff" stroke-width="1.400"/><path d="M7.500 17c0-7 11-7 11 0" stroke="#fff" stroke-width="1.400" fill="none"/><circle cx="5.500" cy="10.500" r="2.800" fill="#000" stroke="#fff" stroke-width="1.400"/><path d="M1 20c0-6 9-6 9 0" stroke="#fff" stroke-width="1.400" fill="none"/></svg>
<svg class="b" style="left:1656px;top:1050px;" width="18" height="10" viewBox="0 0 18 10"><path d="M1 9l8-7.500L17 9" stroke="#fff" stroke-width="1.500" fill="none"/></svg>
<svg class="b" style="left:1684px;top:1047px;" width="22" height="15" viewBox="0 0 22 15"><rect x="5" y="3" width="15" height="10" fill="#fff" stroke="#fff"/><rect x="20.500" y="6" width="1.500" height="4" fill="#fff"/><path d="M2.500 0v3M5 0v3M1 3h5.500v2.500c0 1.500-5.500 1.500-5.500 0zM3.700 7v3h2" stroke="#fff" stroke-width="1.100" fill="none"/></svg>
<svg class="b" style="left:1717px;top:1047px;" width="18" height="17" viewBox="0 0 18 17"><path d="M1 12a14 14 0 0 1 14-11" stroke="#b0b0b0" stroke-width="1.300" fill="none"/><path d="M4.500 13a10 10 0 0 1 10.500-8.500" stroke="#fff" stroke-width="1.300" fill="none"/><path d="M8 14a6.500 6.500 0 0 1 7-5.500" stroke="#fff" stroke-width="1.300" fill="none"/><circle cx="13.500" cy="14" r="1.700" fill="#fff"/></svg>
<svg class="b" style="left:1745px;top:1046px;" width="21" height="18" viewBox="0 0 21 18"><path d="M1 6h3.500l4.500-4.500v15L4.500 12H1z" fill="none" stroke="#fff" stroke-width="1.300"/><path d="M11.500 6.500c1.500 1.500 1.500 4 0 5.500M14 4.500c2.500 2.500 2.500 7 0 9.500" stroke="#fff" stroke-width="1.200" fill="none"/><path d="M16.500 2.500c3.500 3.500 3.500 10 0 13.500" stroke="#8a8a8a" stroke-width="1.200" fill="none"/></svg>
<span class="t" style="left:1786.00px;top:1036.06px;font-size:14.7px;line-height:14.7px;color:#fff;letter-spacing:-0.464px;">2:01 PM</span>
<span class="t" style="left:1778.70px;top:1059.26px;font-size:14.7px;line-height:14.7px;color:#fff;letter-spacing:0.156px;">4/22/2020</span>
<svg class="b" style="left:1869px;top:1045px;" width="21" height="19" viewBox="0 0 21 19"><path d="M0.500 0.500h19v13h-12l-4 4v-4h-3z" fill="#fff"/><path d="M4 4h12M4 7h12M4 10h8" stroke="#000" stroke-width="1.300"/></svg>
<svg class="b" style="left:1878px;top:1055px;" width="22" height="22" viewBox="0 0 22 22"><circle cx="11" cy="11" r="10" fill="#3a3a3a" stroke="#6a6a6a" stroke-width="1"/></svg>
<span class="t" style="left:1881.25px;top:1060.07px;font-size:13.5px;line-height:13.5px;color:#fff;letter-spacing:0.242px;font-weight:700;">21</span>
<div class="b" style="left:1913.5px;top:1031px;width:1px;height:49px;background:#5a5a5a;"></div>
</body></html>
